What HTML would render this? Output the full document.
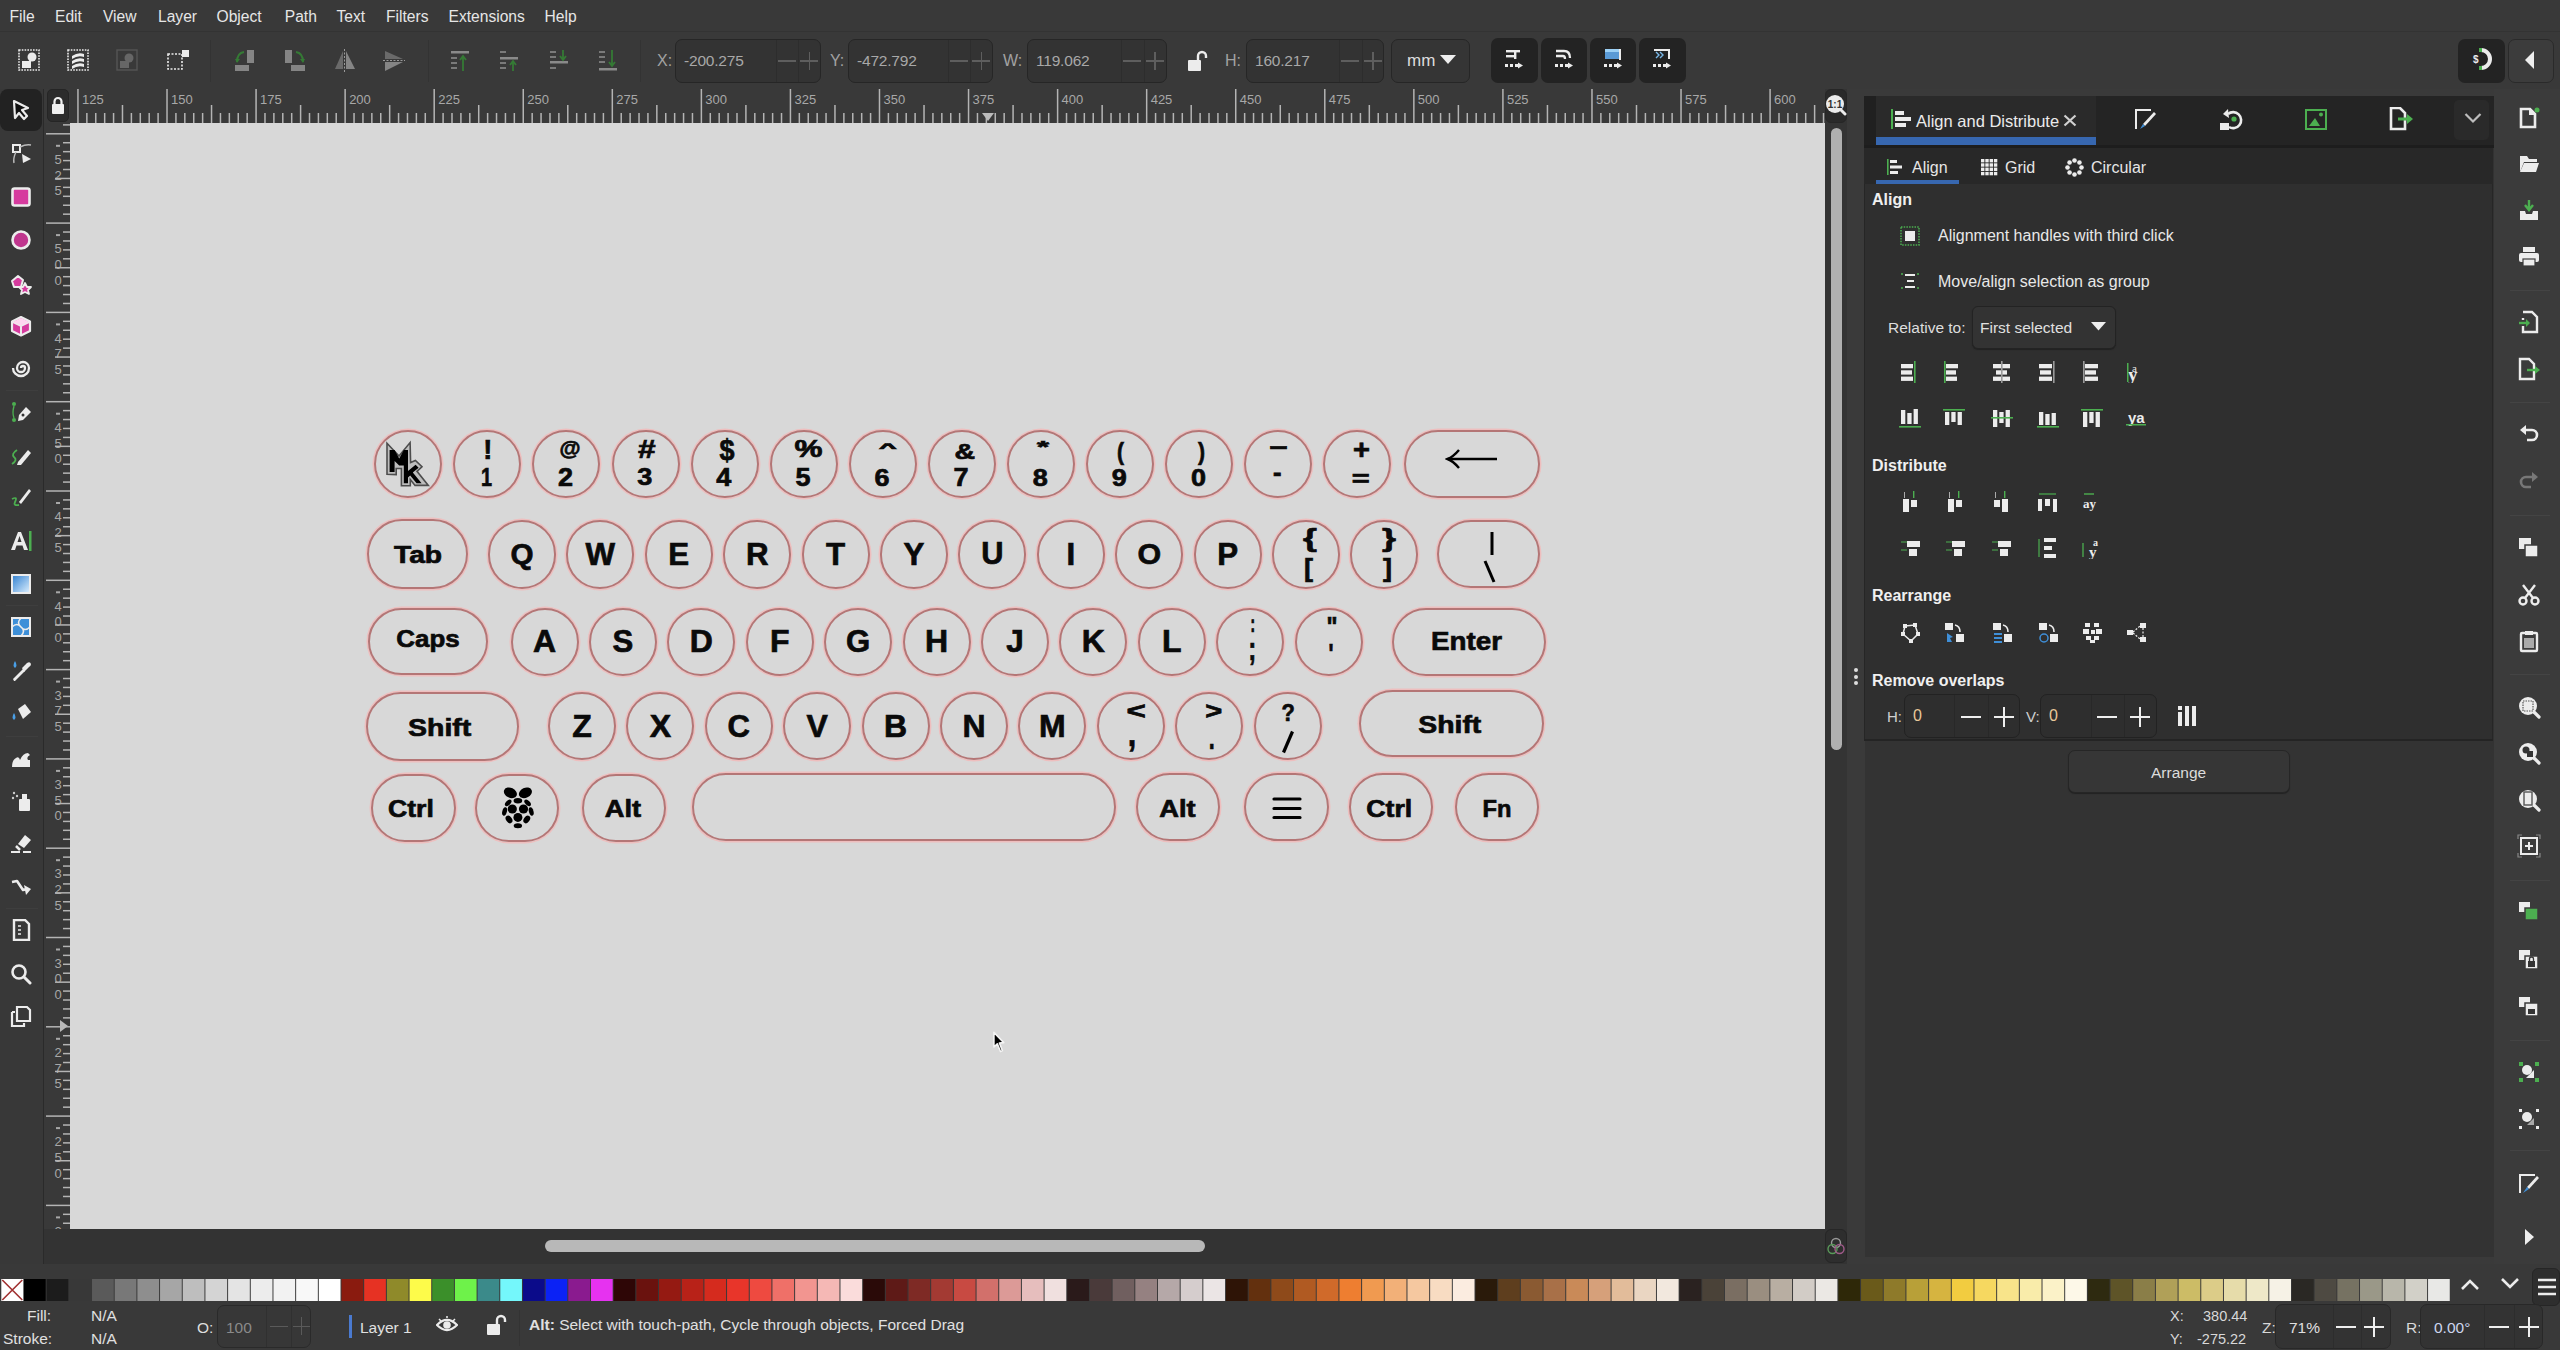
<!DOCTYPE html><html><head><meta charset="utf-8"><style>
html,body{margin:0;padding:0;}body{width:2560px;height:1350px;overflow:hidden;position:relative;background:#3a3a3a;font-family:"Liberation Sans", sans-serif;}
div,svg{box-sizing:border-box;}
</style></head><body>
<div style="position:absolute;left:0px;top:0px;width:2560px;height:32px;background:#393939"></div>
<div style="position:absolute;left:0px;top:31px;width:2560px;height:1px;background:#333"></div>
<div style="position:absolute;left:0px;top:32px;width:2560px;height:57px;background:#393939"></div>
<div style="position:absolute;left:0px;top:89px;width:43px;height:1175px;background:#383838"></div>
<div style="position:absolute;left:43px;top:89px;width:1px;height:1175px;background:#2a2a2a"></div>
<div style="position:absolute;left:44px;top:123px;width:26px;height:1106px;background:#393939"></div>
<div style="position:absolute;left:70px;top:89px;width:1755px;height:34px;background:#393939"></div>
<div style="position:absolute;left:70px;top:123px;width:1755px;height:1106px;background:#d8d8d8"></div>
<div style="position:absolute;left:1825px;top:89px;width:22px;height:1175px;background:#343434"></div>
<div style="position:absolute;left:44px;top:1229px;width:1803px;height:35px;background:#333333"></div>
<div style="position:absolute;left:1847px;top:89px;width:18px;height:1175px;background:#3a3a3a"></div>
<div style="position:absolute;left:1865px;top:96px;width:629px;height:1161px;background:#323232"></div>
<div style="position:absolute;left:2494px;top:89px;width:66px;height:1175px;background:#3b3b3b"></div>
<div style="position:absolute;left:0px;top:1264px;width:2560px;height:38px;background:#393939"></div>
<div style="position:absolute;left:0px;top:1302px;width:2560px;height:48px;background:#393939"></div>
<div style="position:absolute;left:373.6px;top:429.5px;width:68.0px;height:68.0px;border-radius:34.0px;border:2px solid #b47676;box-shadow:0 0 0 1.5px rgba(246,182,182,.75);"></div>
<div style="position:absolute;left:453.3px;top:429.5px;width:68.0px;height:68.0px;border-radius:34.0px;border:2px solid #b47676;box-shadow:0 0 0 1.5px rgba(246,182,182,.75);"></div>
<div style="position:absolute;left:532.4px;top:429.5px;width:68.0px;height:68.0px;border-radius:34.0px;border:2px solid #b47676;box-shadow:0 0 0 1.5px rgba(246,182,182,.75);"></div>
<div style="position:absolute;left:611.5px;top:429.5px;width:68.0px;height:68.0px;border-radius:34.0px;border:2px solid #b47676;box-shadow:0 0 0 1.5px rgba(246,182,182,.75);"></div>
<div style="position:absolute;left:690.6px;top:429.5px;width:68.0px;height:68.0px;border-radius:34.0px;border:2px solid #b47676;box-shadow:0 0 0 1.5px rgba(246,182,182,.75);"></div>
<div style="position:absolute;left:769.7px;top:429.5px;width:68.0px;height:68.0px;border-radius:34.0px;border:2px solid #b47676;box-shadow:0 0 0 1.5px rgba(246,182,182,.75);"></div>
<div style="position:absolute;left:848.8px;top:429.5px;width:68.0px;height:68.0px;border-radius:34.0px;border:2px solid #b47676;box-shadow:0 0 0 1.5px rgba(246,182,182,.75);"></div>
<div style="position:absolute;left:927.9px;top:429.5px;width:68.0px;height:68.0px;border-radius:34.0px;border:2px solid #b47676;box-shadow:0 0 0 1.5px rgba(246,182,182,.75);"></div>
<div style="position:absolute;left:1007.0px;top:429.5px;width:68.0px;height:68.0px;border-radius:34.0px;border:2px solid #b47676;box-shadow:0 0 0 1.5px rgba(246,182,182,.75);"></div>
<div style="position:absolute;left:1086.1px;top:429.5px;width:68.0px;height:68.0px;border-radius:34.0px;border:2px solid #b47676;box-shadow:0 0 0 1.5px rgba(246,182,182,.75);"></div>
<div style="position:absolute;left:1165.2px;top:429.5px;width:68.0px;height:68.0px;border-radius:34.0px;border:2px solid #b47676;box-shadow:0 0 0 1.5px rgba(246,182,182,.75);"></div>
<div style="position:absolute;left:1244.3px;top:429.5px;width:68.0px;height:68.0px;border-radius:34.0px;border:2px solid #b47676;box-shadow:0 0 0 1.5px rgba(246,182,182,.75);"></div>
<div style="position:absolute;left:1323.4px;top:429.5px;width:68.0px;height:68.0px;border-radius:34.0px;border:2px solid #b47676;box-shadow:0 0 0 1.5px rgba(246,182,182,.75);"></div>
<div style="position:absolute;left:1404.0px;top:429.7px;width:136.0px;height:68.3px;border-radius:34.2px;border:2px solid #b47676;box-shadow:0 0 0 1.5px rgba(246,182,182,.75);"></div>
<div style="position:absolute;left:366.7px;top:519.0px;width:101.3px;height:70.0px;border-radius:35.0px;border:2px solid #b47676;box-shadow:0 0 0 1.5px rgba(246,182,182,.75);"></div>
<div style="position:absolute;left:488.0px;top:520.0px;width:68.0px;height:68.7px;border-radius:34.4px;border:2px solid #b47676;box-shadow:0 0 0 1.5px rgba(246,182,182,.75);"></div>
<div style="position:absolute;left:566.4px;top:520.0px;width:68.0px;height:68.7px;border-radius:34.4px;border:2px solid #b47676;box-shadow:0 0 0 1.5px rgba(246,182,182,.75);"></div>
<div style="position:absolute;left:644.8px;top:520.0px;width:68.0px;height:68.7px;border-radius:34.4px;border:2px solid #b47676;box-shadow:0 0 0 1.5px rgba(246,182,182,.75);"></div>
<div style="position:absolute;left:723.2px;top:520.0px;width:68.0px;height:68.7px;border-radius:34.4px;border:2px solid #b47676;box-shadow:0 0 0 1.5px rgba(246,182,182,.75);"></div>
<div style="position:absolute;left:801.6px;top:520.0px;width:68.0px;height:68.7px;border-radius:34.4px;border:2px solid #b47676;box-shadow:0 0 0 1.5px rgba(246,182,182,.75);"></div>
<div style="position:absolute;left:880.0px;top:520.0px;width:68.0px;height:68.7px;border-radius:34.4px;border:2px solid #b47676;box-shadow:0 0 0 1.5px rgba(246,182,182,.75);"></div>
<div style="position:absolute;left:958.4px;top:520.0px;width:68.0px;height:68.7px;border-radius:34.4px;border:2px solid #b47676;box-shadow:0 0 0 1.5px rgba(246,182,182,.75);"></div>
<div style="position:absolute;left:1036.8px;top:520.0px;width:68.0px;height:68.7px;border-radius:34.4px;border:2px solid #b47676;box-shadow:0 0 0 1.5px rgba(246,182,182,.75);"></div>
<div style="position:absolute;left:1115.2px;top:520.0px;width:68.0px;height:68.7px;border-radius:34.4px;border:2px solid #b47676;box-shadow:0 0 0 1.5px rgba(246,182,182,.75);"></div>
<div style="position:absolute;left:1193.6px;top:520.0px;width:68.0px;height:68.7px;border-radius:34.4px;border:2px solid #b47676;box-shadow:0 0 0 1.5px rgba(246,182,182,.75);"></div>
<div style="position:absolute;left:1272.0px;top:520.0px;width:68.0px;height:68.7px;border-radius:34.4px;border:2px solid #b47676;box-shadow:0 0 0 1.5px rgba(246,182,182,.75);"></div>
<div style="position:absolute;left:1350.4px;top:520.0px;width:68.0px;height:68.7px;border-radius:34.4px;border:2px solid #b47676;box-shadow:0 0 0 1.5px rgba(246,182,182,.75);"></div>
<div style="position:absolute;left:1437.0px;top:520.0px;width:102.7px;height:68.0px;border-radius:34.0px;border:2px solid #b47676;box-shadow:0 0 0 1.5px rgba(246,182,182,.75);"></div>
<div style="position:absolute;left:368.2px;top:607.5px;width:119.5px;height:67.0px;border-radius:33.5px;border:2px solid #b47676;box-shadow:0 0 0 1.5px rgba(246,182,182,.75);"></div>
<div style="position:absolute;left:510.5px;top:607.5px;width:68.0px;height:68.0px;border-radius:34.0px;border:2px solid #b47676;box-shadow:0 0 0 1.5px rgba(246,182,182,.75);"></div>
<div style="position:absolute;left:588.9px;top:607.5px;width:68.0px;height:68.0px;border-radius:34.0px;border:2px solid #b47676;box-shadow:0 0 0 1.5px rgba(246,182,182,.75);"></div>
<div style="position:absolute;left:667.3px;top:607.5px;width:68.0px;height:68.0px;border-radius:34.0px;border:2px solid #b47676;box-shadow:0 0 0 1.5px rgba(246,182,182,.75);"></div>
<div style="position:absolute;left:745.7px;top:607.5px;width:68.0px;height:68.0px;border-radius:34.0px;border:2px solid #b47676;box-shadow:0 0 0 1.5px rgba(246,182,182,.75);"></div>
<div style="position:absolute;left:824.1px;top:607.5px;width:68.0px;height:68.0px;border-radius:34.0px;border:2px solid #b47676;box-shadow:0 0 0 1.5px rgba(246,182,182,.75);"></div>
<div style="position:absolute;left:902.5px;top:607.5px;width:68.0px;height:68.0px;border-radius:34.0px;border:2px solid #b47676;box-shadow:0 0 0 1.5px rgba(246,182,182,.75);"></div>
<div style="position:absolute;left:980.9px;top:607.5px;width:68.0px;height:68.0px;border-radius:34.0px;border:2px solid #b47676;box-shadow:0 0 0 1.5px rgba(246,182,182,.75);"></div>
<div style="position:absolute;left:1059.3px;top:607.5px;width:68.0px;height:68.0px;border-radius:34.0px;border:2px solid #b47676;box-shadow:0 0 0 1.5px rgba(246,182,182,.75);"></div>
<div style="position:absolute;left:1137.7px;top:607.5px;width:68.0px;height:68.0px;border-radius:34.0px;border:2px solid #b47676;box-shadow:0 0 0 1.5px rgba(246,182,182,.75);"></div>
<div style="position:absolute;left:1216.1px;top:607.5px;width:68.0px;height:68.0px;border-radius:34.0px;border:2px solid #b47676;box-shadow:0 0 0 1.5px rgba(246,182,182,.75);"></div>
<div style="position:absolute;left:1294.5px;top:607.5px;width:68.0px;height:68.0px;border-radius:34.0px;border:2px solid #b47676;box-shadow:0 0 0 1.5px rgba(246,182,182,.75);"></div>
<div style="position:absolute;left:1392.4px;top:607.5px;width:153.4px;height:68.0px;border-radius:34.0px;border:2px solid #b47676;box-shadow:0 0 0 1.5px rgba(246,182,182,.75);"></div>
<div style="position:absolute;left:365.9px;top:691.7px;width:153.0px;height:69.2px;border-radius:34.6px;border:2px solid #b47676;box-shadow:0 0 0 1.5px rgba(246,182,182,.75);"></div>
<div style="position:absolute;left:548.0px;top:692.0px;width:68.0px;height:68.0px;border-radius:34.0px;border:2px solid #b47676;box-shadow:0 0 0 1.5px rgba(246,182,182,.75);"></div>
<div style="position:absolute;left:626.4px;top:692.0px;width:68.0px;height:68.0px;border-radius:34.0px;border:2px solid #b47676;box-shadow:0 0 0 1.5px rgba(246,182,182,.75);"></div>
<div style="position:absolute;left:704.8px;top:692.0px;width:68.0px;height:68.0px;border-radius:34.0px;border:2px solid #b47676;box-shadow:0 0 0 1.5px rgba(246,182,182,.75);"></div>
<div style="position:absolute;left:783.2px;top:692.0px;width:68.0px;height:68.0px;border-radius:34.0px;border:2px solid #b47676;box-shadow:0 0 0 1.5px rgba(246,182,182,.75);"></div>
<div style="position:absolute;left:861.6px;top:692.0px;width:68.0px;height:68.0px;border-radius:34.0px;border:2px solid #b47676;box-shadow:0 0 0 1.5px rgba(246,182,182,.75);"></div>
<div style="position:absolute;left:940.0px;top:692.0px;width:68.0px;height:68.0px;border-radius:34.0px;border:2px solid #b47676;box-shadow:0 0 0 1.5px rgba(246,182,182,.75);"></div>
<div style="position:absolute;left:1018.4px;top:692.0px;width:68.0px;height:68.0px;border-radius:34.0px;border:2px solid #b47676;box-shadow:0 0 0 1.5px rgba(246,182,182,.75);"></div>
<div style="position:absolute;left:1096.8px;top:692.0px;width:68.0px;height:68.0px;border-radius:34.0px;border:2px solid #b47676;box-shadow:0 0 0 1.5px rgba(246,182,182,.75);"></div>
<div style="position:absolute;left:1175.2px;top:692.0px;width:68.0px;height:68.0px;border-radius:34.0px;border:2px solid #b47676;box-shadow:0 0 0 1.5px rgba(246,182,182,.75);"></div>
<div style="position:absolute;left:1253.6px;top:692.0px;width:68.0px;height:68.0px;border-radius:34.0px;border:2px solid #b47676;box-shadow:0 0 0 1.5px rgba(246,182,182,.75);"></div>
<div style="position:absolute;left:1359.0px;top:689.7px;width:185.3px;height:67.8px;border-radius:33.9px;border:2px solid #b47676;box-shadow:0 0 0 1.5px rgba(246,182,182,.75);"></div>
<div style="position:absolute;left:370.5px;top:773.5px;width:85.5px;height:68.0px;border-radius:34.0px;border:2px solid #b47676;box-shadow:0 0 0 1.5px rgba(246,182,182,.75);"></div>
<div style="position:absolute;left:474.8px;top:773.5px;width:84.4px;height:68.0px;border-radius:34.0px;border:2px solid #b47676;box-shadow:0 0 0 1.5px rgba(246,182,182,.75);"></div>
<div style="position:absolute;left:581.5px;top:773.5px;width:84.3px;height:68.0px;border-radius:34.0px;border:2px solid #b47676;box-shadow:0 0 0 1.5px rgba(246,182,182,.75);"></div>
<div style="position:absolute;left:691.6px;top:773.2px;width:424.0px;height:67.8px;border-radius:33.9px;border:2px solid #b47676;box-shadow:0 0 0 1.5px rgba(246,182,182,.75);"></div>
<div style="position:absolute;left:1136.2px;top:773.2px;width:83.5px;height:67.8px;border-radius:33.9px;border:2px solid #b47676;box-shadow:0 0 0 1.5px rgba(246,182,182,.75);"></div>
<div style="position:absolute;left:1244.0px;top:773.2px;width:84.7px;height:67.8px;border-radius:33.9px;border:2px solid #b47676;box-shadow:0 0 0 1.5px rgba(246,182,182,.75);"></div>
<div style="position:absolute;left:1349.3px;top:773.2px;width:83.6px;height:67.8px;border-radius:33.9px;border:2px solid #b47676;box-shadow:0 0 0 1.5px rgba(246,182,182,.75);"></div>
<div style="position:absolute;left:1454.7px;top:773.2px;width:84.7px;height:67.8px;border-radius:33.9px;border:2px solid #b47676;box-shadow:0 0 0 1.5px rgba(246,182,182,.75);"></div>
<svg style="position:absolute;left:0;top:0" width="2560" height="1350" font-family="Liberation Sans" font-weight="bold" fill="#0a0a0a" stroke="#0a0a0a" stroke-width="0.7"><text transform="translate(481.00 485.75) scale(0.779 1)" font-size="25.45">1</text><text transform="translate(558.10 485.75) scale(1.077 1)" font-size="25.09">2</text><text transform="translate(637.20 485.44) scale(1.097 1)" font-size="24.65">3</text><text transform="translate(716.30 485.75) scale(1.062 1)" font-size="25.45">4</text><text transform="translate(795.40 485.50) scale(1.077 1)" font-size="25.09">5</text><text transform="translate(874.50 485.50) scale(1.093 1)" font-size="24.73">6</text><text transform="translate(953.60 485.75) scale(1.062 1)" font-size="25.45">7</text><text transform="translate(1032.70 485.50) scale(1.093 1)" font-size="24.73">8</text><text transform="translate(1111.80 485.50) scale(1.093 1)" font-size="24.73">9</text><text transform="translate(1190.90 485.50) scale(1.093 1)" font-size="24.73">0</text><text transform="translate(483.28 458.75) scale(1.000 1)" font-size="27.20">!</text><text transform="translate(559.50 455.43) scale(1.038 1)" font-size="20.75">@</text><text transform="translate(638.00 457.50) scale(1.232 1)" font-size="25.74">#</text><text transform="translate(719.40 460.30) scale(0.933 1)" font-size="28.96">$</text><text transform="translate(794.40 457.35) scale(1.360 1)" font-size="23.13">%</text><text transform="translate(879.10 451.60) scale(2.522 1)" font-size="11.93">^</text><text transform="translate(954.50 458.55) scale(1.272 1)" font-size="22.42">&amp;</text><text transform="translate(1037.00 452.80) scale(1.923 1)" font-size="16.00">*</text><text transform="translate(1116.90 459.68) scale(0.854 1)" font-size="24.66">(</text><text transform="translate(1198.10 459.68) scale(0.854 1)" font-size="24.66">)</text><text transform="translate(1353.00 458.77) scale(1.084 1)" font-size="26.81">+</text><text transform="translate(1269.50 454.87) scale(1.297 1)" font-size="25.00">–</text><text transform="translate(1273.05 481.00) scale(1.023 1)" font-size="25.00">-</text><text transform="translate(1351.80 485.50) scale(1.455 1)" font-size="21.15">=</text><text transform="translate(510.49 563.90) scale(1.000 1)" font-size="29.61">Q</text><text transform="translate(585.62 564.75) scale(1.000 1)" font-size="31.27">W</text><text transform="translate(668.36 564.75) scale(1.000 1)" font-size="31.27">E</text><text transform="translate(745.90 564.75) scale(1.000 1)" font-size="31.27">R</text><text transform="translate(826.06 564.75) scale(1.000 1)" font-size="31.27">T</text><text transform="translate(903.56 564.75) scale(1.000 1)" font-size="31.27">Y</text><text transform="translate(981.26 564.44) scale(1.000 1)" font-size="30.82">U</text><text transform="translate(1066.46 564.75) scale(1.000 1)" font-size="31.27">I</text><text transform="translate(1137.39 564.45) scale(1.000 1)" font-size="30.39">O</text><text transform="translate(1217.16 564.75) scale(1.000 1)" font-size="31.27">P</text><text transform="translate(532.94 652.00) scale(1.000 1)" font-size="32.00">A</text><text transform="translate(612.52 651.69) scale(1.000 1)" font-size="31.10">S</text><text transform="translate(689.74 652.00) scale(1.000 1)" font-size="32.00">D</text><text transform="translate(769.94 652.00) scale(1.000 1)" font-size="32.00">F</text><text transform="translate(846.01 651.69) scale(1.000 1)" font-size="31.10">G</text><text transform="translate(924.94 652.00) scale(1.000 1)" font-size="32.00">H</text><text transform="translate(1006.15 651.68) scale(1.000 1)" font-size="31.54">J</text><text transform="translate(1081.74 652.00) scale(1.000 1)" font-size="32.00">K</text><text transform="translate(1161.94 652.00) scale(1.000 1)" font-size="32.00">L</text><text transform="translate(572.24 737.20) scale(1.000 1)" font-size="32.00">Z</text><text transform="translate(649.72 737.20) scale(1.000 1)" font-size="32.00">X</text><text transform="translate(727.57 736.89) scale(1.000 1)" font-size="31.10">C</text><text transform="translate(806.52 737.20) scale(1.000 1)" font-size="32.00">V</text><text transform="translate(884.04 737.20) scale(1.000 1)" font-size="32.00">B</text><text transform="translate(962.44 737.20) scale(1.000 1)" font-size="32.00">N</text><text transform="translate(1039.08 737.20) scale(1.000 1)" font-size="32.00">M</text><text transform="translate(1303.00 547.49) scale(1.431 1)" font-size="25.09">{</text><text transform="translate(1304.00 576.64) scale(1.039 1)" font-size="26.06">[</text><text transform="translate(1381.90 547.49) scale(1.431 1)" font-size="25.09">}</text><text transform="translate(1382.90 576.64) scale(1.039 1)" font-size="26.06">]</text><text transform="translate(1250.20 631.90) scale(0.622 1)" font-size="24.16">:</text><text transform="translate(1248.20 660.14) scale(0.709 1)" font-size="33.94">;</text><text transform="translate(1126.50 718.75) scale(1.372 1)" font-size="24.17">&lt;</text><text transform="translate(1127.75 745.91) scale(0.849 1)" font-size="36.07">,</text><text transform="translate(1205.20 718.75) scale(1.202 1)" font-size="24.17">&gt;</text><text transform="translate(1208.80 749.00) scale(0.649 1)" font-size="33.33">.</text><text transform="translate(1281.45 721.00) scale(0.895 1)" font-size="24.37">?</text><text transform="translate(1326.50 636.18) scale(0.858 1)" font-size="27.00">&quot;</text><text transform="translate(1328.50 663.28) scale(0.780 1)" font-size="27.00">'</text><text transform="translate(394.00 563.11) scale(1.198 1)" font-size="23.54">Tab</text><text transform="translate(396.35 647.04) scale(1.051 1)" font-size="24.64">Caps</text><text transform="translate(1431.00 649.89) scale(1.059 1)" font-size="26.24">Enter</text><text transform="translate(408.05 735.91) scale(1.196 1)" font-size="23.81">Shift</text><text transform="translate(1418.30 733.31) scale(1.191 1)" font-size="23.81">Shift</text><text transform="translate(388.00 816.86) scale(1.110 1)" font-size="23.95">Ctrl</text><text transform="translate(604.85 816.86) scale(1.138 1)" font-size="23.95">Alt</text><text transform="translate(1159.25 816.67) scale(1.178 1)" font-size="23.13">Alt</text><text transform="translate(1366.30 816.67) scale(1.155 1)" font-size="23.13">Ctrl</text><text transform="translate(1482.50 816.90) scale(0.959 1)" font-size="24.73">Fn</text></svg>
<svg style="position:absolute;left:70px;top:89px;" width="1755" height="34" viewBox="0 0 1755 34"><rect x="7.20" y="0" width="1.5" height="34" fill="#b4b4b4"/><text x="11.95" y="15" font-size="13" fill="#a8a8a8" font-family="Liberation Sans">125</text><rect x="16.11" y="24" width="1.5" height="10" fill="#b4b4b4"/><rect x="25.01" y="24" width="1.5" height="10" fill="#b4b4b4"/><rect x="33.92" y="24" width="1.5" height="10" fill="#b4b4b4"/><rect x="42.82" y="24" width="1.5" height="10" fill="#b4b4b4"/><rect x="51.73" y="16" width="1.5" height="18" fill="#b4b4b4"/><rect x="60.64" y="24" width="1.5" height="10" fill="#b4b4b4"/><rect x="69.54" y="24" width="1.5" height="10" fill="#b4b4b4"/><rect x="78.45" y="24" width="1.5" height="10" fill="#b4b4b4"/><rect x="87.35" y="24" width="1.5" height="10" fill="#b4b4b4"/><rect x="96.26" y="0" width="1.5" height="34" fill="#b4b4b4"/><text x="101.01" y="15" font-size="13" fill="#a8a8a8" font-family="Liberation Sans">150</text><rect x="105.17" y="24" width="1.5" height="10" fill="#b4b4b4"/><rect x="114.07" y="24" width="1.5" height="10" fill="#b4b4b4"/><rect x="122.98" y="24" width="1.5" height="10" fill="#b4b4b4"/><rect x="131.88" y="24" width="1.5" height="10" fill="#b4b4b4"/><rect x="140.79" y="16" width="1.5" height="18" fill="#b4b4b4"/><rect x="149.70" y="24" width="1.5" height="10" fill="#b4b4b4"/><rect x="158.60" y="24" width="1.5" height="10" fill="#b4b4b4"/><rect x="167.51" y="24" width="1.5" height="10" fill="#b4b4b4"/><rect x="176.41" y="24" width="1.5" height="10" fill="#b4b4b4"/><rect x="185.32" y="0" width="1.5" height="34" fill="#b4b4b4"/><text x="190.07" y="15" font-size="13" fill="#a8a8a8" font-family="Liberation Sans">175</text><rect x="194.23" y="24" width="1.5" height="10" fill="#b4b4b4"/><rect x="203.13" y="24" width="1.5" height="10" fill="#b4b4b4"/><rect x="212.04" y="24" width="1.5" height="10" fill="#b4b4b4"/><rect x="220.94" y="24" width="1.5" height="10" fill="#b4b4b4"/><rect x="229.85" y="16" width="1.5" height="18" fill="#b4b4b4"/><rect x="238.76" y="24" width="1.5" height="10" fill="#b4b4b4"/><rect x="247.66" y="24" width="1.5" height="10" fill="#b4b4b4"/><rect x="256.57" y="24" width="1.5" height="10" fill="#b4b4b4"/><rect x="265.47" y="24" width="1.5" height="10" fill="#b4b4b4"/><rect x="274.38" y="0" width="1.5" height="34" fill="#b4b4b4"/><text x="279.13" y="15" font-size="13" fill="#a8a8a8" font-family="Liberation Sans">200</text><rect x="283.29" y="24" width="1.5" height="10" fill="#b4b4b4"/><rect x="292.19" y="24" width="1.5" height="10" fill="#b4b4b4"/><rect x="301.10" y="24" width="1.5" height="10" fill="#b4b4b4"/><rect x="310.00" y="24" width="1.5" height="10" fill="#b4b4b4"/><rect x="318.91" y="16" width="1.5" height="18" fill="#b4b4b4"/><rect x="327.82" y="24" width="1.5" height="10" fill="#b4b4b4"/><rect x="336.72" y="24" width="1.5" height="10" fill="#b4b4b4"/><rect x="345.63" y="24" width="1.5" height="10" fill="#b4b4b4"/><rect x="354.53" y="24" width="1.5" height="10" fill="#b4b4b4"/><rect x="363.44" y="0" width="1.5" height="34" fill="#b4b4b4"/><text x="368.19" y="15" font-size="13" fill="#a8a8a8" font-family="Liberation Sans">225</text><rect x="372.35" y="24" width="1.5" height="10" fill="#b4b4b4"/><rect x="381.25" y="24" width="1.5" height="10" fill="#b4b4b4"/><rect x="390.16" y="24" width="1.5" height="10" fill="#b4b4b4"/><rect x="399.06" y="24" width="1.5" height="10" fill="#b4b4b4"/><rect x="407.97" y="16" width="1.5" height="18" fill="#b4b4b4"/><rect x="416.88" y="24" width="1.5" height="10" fill="#b4b4b4"/><rect x="425.78" y="24" width="1.5" height="10" fill="#b4b4b4"/><rect x="434.69" y="24" width="1.5" height="10" fill="#b4b4b4"/><rect x="443.59" y="24" width="1.5" height="10" fill="#b4b4b4"/><rect x="452.50" y="0" width="1.5" height="34" fill="#b4b4b4"/><text x="457.25" y="15" font-size="13" fill="#a8a8a8" font-family="Liberation Sans">250</text><rect x="461.41" y="24" width="1.5" height="10" fill="#b4b4b4"/><rect x="470.31" y="24" width="1.5" height="10" fill="#b4b4b4"/><rect x="479.22" y="24" width="1.5" height="10" fill="#b4b4b4"/><rect x="488.12" y="24" width="1.5" height="10" fill="#b4b4b4"/><rect x="497.03" y="16" width="1.5" height="18" fill="#b4b4b4"/><rect x="505.94" y="24" width="1.5" height="10" fill="#b4b4b4"/><rect x="514.84" y="24" width="1.5" height="10" fill="#b4b4b4"/><rect x="523.75" y="24" width="1.5" height="10" fill="#b4b4b4"/><rect x="532.65" y="24" width="1.5" height="10" fill="#b4b4b4"/><rect x="541.56" y="0" width="1.5" height="34" fill="#b4b4b4"/><text x="546.31" y="15" font-size="13" fill="#a8a8a8" font-family="Liberation Sans">275</text><rect x="550.47" y="24" width="1.5" height="10" fill="#b4b4b4"/><rect x="559.37" y="24" width="1.5" height="10" fill="#b4b4b4"/><rect x="568.28" y="24" width="1.5" height="10" fill="#b4b4b4"/><rect x="577.18" y="24" width="1.5" height="10" fill="#b4b4b4"/><rect x="586.09" y="16" width="1.5" height="18" fill="#b4b4b4"/><rect x="595.00" y="24" width="1.5" height="10" fill="#b4b4b4"/><rect x="603.90" y="24" width="1.5" height="10" fill="#b4b4b4"/><rect x="612.81" y="24" width="1.5" height="10" fill="#b4b4b4"/><rect x="621.71" y="24" width="1.5" height="10" fill="#b4b4b4"/><rect x="630.62" y="0" width="1.5" height="34" fill="#b4b4b4"/><text x="635.37" y="15" font-size="13" fill="#a8a8a8" font-family="Liberation Sans">300</text><rect x="639.53" y="24" width="1.5" height="10" fill="#b4b4b4"/><rect x="648.43" y="24" width="1.5" height="10" fill="#b4b4b4"/><rect x="657.34" y="24" width="1.5" height="10" fill="#b4b4b4"/><rect x="666.24" y="24" width="1.5" height="10" fill="#b4b4b4"/><rect x="675.15" y="16" width="1.5" height="18" fill="#b4b4b4"/><rect x="684.06" y="24" width="1.5" height="10" fill="#b4b4b4"/><rect x="692.96" y="24" width="1.5" height="10" fill="#b4b4b4"/><rect x="701.87" y="24" width="1.5" height="10" fill="#b4b4b4"/><rect x="710.77" y="24" width="1.5" height="10" fill="#b4b4b4"/><rect x="719.68" y="0" width="1.5" height="34" fill="#b4b4b4"/><text x="724.43" y="15" font-size="13" fill="#a8a8a8" font-family="Liberation Sans">325</text><rect x="728.59" y="24" width="1.5" height="10" fill="#b4b4b4"/><rect x="737.49" y="24" width="1.5" height="10" fill="#b4b4b4"/><rect x="746.40" y="24" width="1.5" height="10" fill="#b4b4b4"/><rect x="755.30" y="24" width="1.5" height="10" fill="#b4b4b4"/><rect x="764.21" y="16" width="1.5" height="18" fill="#b4b4b4"/><rect x="773.12" y="24" width="1.5" height="10" fill="#b4b4b4"/><rect x="782.02" y="24" width="1.5" height="10" fill="#b4b4b4"/><rect x="790.93" y="24" width="1.5" height="10" fill="#b4b4b4"/><rect x="799.83" y="24" width="1.5" height="10" fill="#b4b4b4"/><rect x="808.74" y="0" width="1.5" height="34" fill="#b4b4b4"/><text x="813.49" y="15" font-size="13" fill="#a8a8a8" font-family="Liberation Sans">350</text><rect x="817.65" y="24" width="1.5" height="10" fill="#b4b4b4"/><rect x="826.55" y="24" width="1.5" height="10" fill="#b4b4b4"/><rect x="835.46" y="24" width="1.5" height="10" fill="#b4b4b4"/><rect x="844.36" y="24" width="1.5" height="10" fill="#b4b4b4"/><rect x="853.27" y="16" width="1.5" height="18" fill="#b4b4b4"/><rect x="862.18" y="24" width="1.5" height="10" fill="#b4b4b4"/><rect x="871.08" y="24" width="1.5" height="10" fill="#b4b4b4"/><rect x="879.99" y="24" width="1.5" height="10" fill="#b4b4b4"/><rect x="888.89" y="24" width="1.5" height="10" fill="#b4b4b4"/><rect x="897.80" y="0" width="1.5" height="34" fill="#b4b4b4"/><text x="902.55" y="15" font-size="13" fill="#a8a8a8" font-family="Liberation Sans">375</text><rect x="906.71" y="24" width="1.5" height="10" fill="#b4b4b4"/><rect x="915.61" y="24" width="1.5" height="10" fill="#b4b4b4"/><rect x="924.52" y="24" width="1.5" height="10" fill="#b4b4b4"/><rect x="933.42" y="24" width="1.5" height="10" fill="#b4b4b4"/><rect x="942.33" y="16" width="1.5" height="18" fill="#b4b4b4"/><rect x="951.24" y="24" width="1.5" height="10" fill="#b4b4b4"/><rect x="960.14" y="24" width="1.5" height="10" fill="#b4b4b4"/><rect x="969.05" y="24" width="1.5" height="10" fill="#b4b4b4"/><rect x="977.95" y="24" width="1.5" height="10" fill="#b4b4b4"/><rect x="986.86" y="0" width="1.5" height="34" fill="#b4b4b4"/><text x="991.61" y="15" font-size="13" fill="#a8a8a8" font-family="Liberation Sans">400</text><rect x="995.77" y="24" width="1.5" height="10" fill="#b4b4b4"/><rect x="1004.67" y="24" width="1.5" height="10" fill="#b4b4b4"/><rect x="1013.58" y="24" width="1.5" height="10" fill="#b4b4b4"/><rect x="1022.48" y="24" width="1.5" height="10" fill="#b4b4b4"/><rect x="1031.39" y="16" width="1.5" height="18" fill="#b4b4b4"/><rect x="1040.30" y="24" width="1.5" height="10" fill="#b4b4b4"/><rect x="1049.20" y="24" width="1.5" height="10" fill="#b4b4b4"/><rect x="1058.11" y="24" width="1.5" height="10" fill="#b4b4b4"/><rect x="1067.01" y="24" width="1.5" height="10" fill="#b4b4b4"/><rect x="1075.92" y="0" width="1.5" height="34" fill="#b4b4b4"/><text x="1080.67" y="15" font-size="13" fill="#a8a8a8" font-family="Liberation Sans">425</text><rect x="1084.83" y="24" width="1.5" height="10" fill="#b4b4b4"/><rect x="1093.73" y="24" width="1.5" height="10" fill="#b4b4b4"/><rect x="1102.64" y="24" width="1.5" height="10" fill="#b4b4b4"/><rect x="1111.54" y="24" width="1.5" height="10" fill="#b4b4b4"/><rect x="1120.45" y="16" width="1.5" height="18" fill="#b4b4b4"/><rect x="1129.36" y="24" width="1.5" height="10" fill="#b4b4b4"/><rect x="1138.26" y="24" width="1.5" height="10" fill="#b4b4b4"/><rect x="1147.17" y="24" width="1.5" height="10" fill="#b4b4b4"/><rect x="1156.07" y="24" width="1.5" height="10" fill="#b4b4b4"/><rect x="1164.98" y="0" width="1.5" height="34" fill="#b4b4b4"/><text x="1169.73" y="15" font-size="13" fill="#a8a8a8" font-family="Liberation Sans">450</text><rect x="1173.89" y="24" width="1.5" height="10" fill="#b4b4b4"/><rect x="1182.79" y="24" width="1.5" height="10" fill="#b4b4b4"/><rect x="1191.70" y="24" width="1.5" height="10" fill="#b4b4b4"/><rect x="1200.60" y="24" width="1.5" height="10" fill="#b4b4b4"/><rect x="1209.51" y="16" width="1.5" height="18" fill="#b4b4b4"/><rect x="1218.42" y="24" width="1.5" height="10" fill="#b4b4b4"/><rect x="1227.32" y="24" width="1.5" height="10" fill="#b4b4b4"/><rect x="1236.23" y="24" width="1.5" height="10" fill="#b4b4b4"/><rect x="1245.13" y="24" width="1.5" height="10" fill="#b4b4b4"/><rect x="1254.04" y="0" width="1.5" height="34" fill="#b4b4b4"/><text x="1258.79" y="15" font-size="13" fill="#a8a8a8" font-family="Liberation Sans">475</text><rect x="1262.95" y="24" width="1.5" height="10" fill="#b4b4b4"/><rect x="1271.85" y="24" width="1.5" height="10" fill="#b4b4b4"/><rect x="1280.76" y="24" width="1.5" height="10" fill="#b4b4b4"/><rect x="1289.66" y="24" width="1.5" height="10" fill="#b4b4b4"/><rect x="1298.57" y="16" width="1.5" height="18" fill="#b4b4b4"/><rect x="1307.48" y="24" width="1.5" height="10" fill="#b4b4b4"/><rect x="1316.38" y="24" width="1.5" height="10" fill="#b4b4b4"/><rect x="1325.29" y="24" width="1.5" height="10" fill="#b4b4b4"/><rect x="1334.19" y="24" width="1.5" height="10" fill="#b4b4b4"/><rect x="1343.10" y="0" width="1.5" height="34" fill="#b4b4b4"/><text x="1347.85" y="15" font-size="13" fill="#a8a8a8" font-family="Liberation Sans">500</text><rect x="1352.01" y="24" width="1.5" height="10" fill="#b4b4b4"/><rect x="1360.91" y="24" width="1.5" height="10" fill="#b4b4b4"/><rect x="1369.82" y="24" width="1.5" height="10" fill="#b4b4b4"/><rect x="1378.72" y="24" width="1.5" height="10" fill="#b4b4b4"/><rect x="1387.63" y="16" width="1.5" height="18" fill="#b4b4b4"/><rect x="1396.54" y="24" width="1.5" height="10" fill="#b4b4b4"/><rect x="1405.44" y="24" width="1.5" height="10" fill="#b4b4b4"/><rect x="1414.35" y="24" width="1.5" height="10" fill="#b4b4b4"/><rect x="1423.25" y="24" width="1.5" height="10" fill="#b4b4b4"/><rect x="1432.16" y="0" width="1.5" height="34" fill="#b4b4b4"/><text x="1436.91" y="15" font-size="13" fill="#a8a8a8" font-family="Liberation Sans">525</text><rect x="1441.07" y="24" width="1.5" height="10" fill="#b4b4b4"/><rect x="1449.97" y="24" width="1.5" height="10" fill="#b4b4b4"/><rect x="1458.88" y="24" width="1.5" height="10" fill="#b4b4b4"/><rect x="1467.78" y="24" width="1.5" height="10" fill="#b4b4b4"/><rect x="1476.69" y="16" width="1.5" height="18" fill="#b4b4b4"/><rect x="1485.60" y="24" width="1.5" height="10" fill="#b4b4b4"/><rect x="1494.50" y="24" width="1.5" height="10" fill="#b4b4b4"/><rect x="1503.41" y="24" width="1.5" height="10" fill="#b4b4b4"/><rect x="1512.31" y="24" width="1.5" height="10" fill="#b4b4b4"/><rect x="1521.22" y="0" width="1.5" height="34" fill="#b4b4b4"/><text x="1525.97" y="15" font-size="13" fill="#a8a8a8" font-family="Liberation Sans">550</text><rect x="1530.13" y="24" width="1.5" height="10" fill="#b4b4b4"/><rect x="1539.03" y="24" width="1.5" height="10" fill="#b4b4b4"/><rect x="1547.94" y="24" width="1.5" height="10" fill="#b4b4b4"/><rect x="1556.84" y="24" width="1.5" height="10" fill="#b4b4b4"/><rect x="1565.75" y="16" width="1.5" height="18" fill="#b4b4b4"/><rect x="1574.66" y="24" width="1.5" height="10" fill="#b4b4b4"/><rect x="1583.56" y="24" width="1.5" height="10" fill="#b4b4b4"/><rect x="1592.47" y="24" width="1.5" height="10" fill="#b4b4b4"/><rect x="1601.37" y="24" width="1.5" height="10" fill="#b4b4b4"/><rect x="1610.28" y="0" width="1.5" height="34" fill="#b4b4b4"/><text x="1615.03" y="15" font-size="13" fill="#a8a8a8" font-family="Liberation Sans">575</text><rect x="1619.19" y="24" width="1.5" height="10" fill="#b4b4b4"/><rect x="1628.09" y="24" width="1.5" height="10" fill="#b4b4b4"/><rect x="1637.00" y="24" width="1.5" height="10" fill="#b4b4b4"/><rect x="1645.90" y="24" width="1.5" height="10" fill="#b4b4b4"/><rect x="1654.81" y="16" width="1.5" height="18" fill="#b4b4b4"/><rect x="1663.72" y="24" width="1.5" height="10" fill="#b4b4b4"/><rect x="1672.62" y="24" width="1.5" height="10" fill="#b4b4b4"/><rect x="1681.53" y="24" width="1.5" height="10" fill="#b4b4b4"/><rect x="1690.43" y="24" width="1.5" height="10" fill="#b4b4b4"/><rect x="1699.34" y="0" width="1.5" height="34" fill="#b4b4b4"/><text x="1704.09" y="15" font-size="13" fill="#a8a8a8" font-family="Liberation Sans">600</text><rect x="1708.25" y="24" width="1.5" height="10" fill="#b4b4b4"/><rect x="1717.15" y="24" width="1.5" height="10" fill="#b4b4b4"/><rect x="1726.06" y="24" width="1.5" height="10" fill="#b4b4b4"/><rect x="1734.96" y="24" width="1.5" height="10" fill="#b4b4b4"/><rect x="1743.87" y="16" width="1.5" height="18" fill="#b4b4b4"/><rect x="1752.78" y="24" width="1.5" height="10" fill="#b4b4b4"/></svg>
<svg style="position:absolute;left:980px;top:113px;" width="16" height="10" viewBox="0 0 16 10"><path d="M2 0 L14 0 L8 8 Z" fill="#bbb"/></svg>
<svg style="position:absolute;left:44px;top:123px;" width="26" height="1106" viewBox="0 0 26 1106"><rect x="19" y="1.12" width="7" height="1.5" fill="#b4b4b4"/><rect x="2" y="10.05" width="24" height="1.5" fill="#b4b4b4"/><rect x="12" y="21.80" width="4" height="2" fill="#a8a8a8"/><text x="14" y="41.00" font-size="13" text-anchor="middle" fill="#a8a8a8" font-family="Liberation Sans">5</text><text x="14" y="56.60" font-size="13" text-anchor="middle" fill="#a8a8a8" font-family="Liberation Sans">2</text><text x="14" y="72.20" font-size="13" text-anchor="middle" fill="#a8a8a8" font-family="Liberation Sans">5</text><rect x="19" y="18.98" width="7" height="1.5" fill="#b4b4b4"/><rect x="19" y="27.91" width="7" height="1.5" fill="#b4b4b4"/><rect x="19" y="36.84" width="7" height="1.5" fill="#b4b4b4"/><rect x="19" y="45.77" width="7" height="1.5" fill="#b4b4b4"/><rect x="11" y="54.70" width="15" height="1.5" fill="#b4b4b4"/><rect x="19" y="63.63" width="7" height="1.5" fill="#b4b4b4"/><rect x="19" y="72.56" width="7" height="1.5" fill="#b4b4b4"/><rect x="19" y="81.49" width="7" height="1.5" fill="#b4b4b4"/><rect x="19" y="90.42" width="7" height="1.5" fill="#b4b4b4"/><rect x="2" y="99.35" width="24" height="1.5" fill="#b4b4b4"/><rect x="12" y="111.10" width="4" height="2" fill="#a8a8a8"/><text x="14" y="130.30" font-size="13" text-anchor="middle" fill="#a8a8a8" font-family="Liberation Sans">5</text><text x="14" y="145.90" font-size="13" text-anchor="middle" fill="#a8a8a8" font-family="Liberation Sans">0</text><text x="14" y="161.50" font-size="13" text-anchor="middle" fill="#a8a8a8" font-family="Liberation Sans">0</text><rect x="19" y="108.28" width="7" height="1.5" fill="#b4b4b4"/><rect x="19" y="117.21" width="7" height="1.5" fill="#b4b4b4"/><rect x="19" y="126.14" width="7" height="1.5" fill="#b4b4b4"/><rect x="19" y="135.07" width="7" height="1.5" fill="#b4b4b4"/><rect x="11" y="144.00" width="15" height="1.5" fill="#b4b4b4"/><rect x="19" y="152.93" width="7" height="1.5" fill="#b4b4b4"/><rect x="19" y="161.86" width="7" height="1.5" fill="#b4b4b4"/><rect x="19" y="170.79" width="7" height="1.5" fill="#b4b4b4"/><rect x="19" y="179.72" width="7" height="1.5" fill="#b4b4b4"/><rect x="2" y="188.65" width="24" height="1.5" fill="#b4b4b4"/><rect x="12" y="200.40" width="4" height="2" fill="#a8a8a8"/><text x="14" y="219.60" font-size="13" text-anchor="middle" fill="#a8a8a8" font-family="Liberation Sans">4</text><text x="14" y="235.20" font-size="13" text-anchor="middle" fill="#a8a8a8" font-family="Liberation Sans">7</text><text x="14" y="250.80" font-size="13" text-anchor="middle" fill="#a8a8a8" font-family="Liberation Sans">5</text><rect x="19" y="197.58" width="7" height="1.5" fill="#b4b4b4"/><rect x="19" y="206.51" width="7" height="1.5" fill="#b4b4b4"/><rect x="19" y="215.44" width="7" height="1.5" fill="#b4b4b4"/><rect x="19" y="224.37" width="7" height="1.5" fill="#b4b4b4"/><rect x="11" y="233.30" width="15" height="1.5" fill="#b4b4b4"/><rect x="19" y="242.23" width="7" height="1.5" fill="#b4b4b4"/><rect x="19" y="251.16" width="7" height="1.5" fill="#b4b4b4"/><rect x="19" y="260.09" width="7" height="1.5" fill="#b4b4b4"/><rect x="19" y="269.02" width="7" height="1.5" fill="#b4b4b4"/><rect x="2" y="277.95" width="24" height="1.5" fill="#b4b4b4"/><rect x="12" y="289.70" width="4" height="2" fill="#a8a8a8"/><text x="14" y="308.90" font-size="13" text-anchor="middle" fill="#a8a8a8" font-family="Liberation Sans">4</text><text x="14" y="324.50" font-size="13" text-anchor="middle" fill="#a8a8a8" font-family="Liberation Sans">5</text><text x="14" y="340.10" font-size="13" text-anchor="middle" fill="#a8a8a8" font-family="Liberation Sans">0</text><rect x="19" y="286.88" width="7" height="1.5" fill="#b4b4b4"/><rect x="19" y="295.81" width="7" height="1.5" fill="#b4b4b4"/><rect x="19" y="304.74" width="7" height="1.5" fill="#b4b4b4"/><rect x="19" y="313.67" width="7" height="1.5" fill="#b4b4b4"/><rect x="11" y="322.60" width="15" height="1.5" fill="#b4b4b4"/><rect x="19" y="331.53" width="7" height="1.5" fill="#b4b4b4"/><rect x="19" y="340.46" width="7" height="1.5" fill="#b4b4b4"/><rect x="19" y="349.39" width="7" height="1.5" fill="#b4b4b4"/><rect x="19" y="358.32" width="7" height="1.5" fill="#b4b4b4"/><rect x="2" y="367.25" width="24" height="1.5" fill="#b4b4b4"/><rect x="12" y="379.00" width="4" height="2" fill="#a8a8a8"/><text x="14" y="398.20" font-size="13" text-anchor="middle" fill="#a8a8a8" font-family="Liberation Sans">4</text><text x="14" y="413.80" font-size="13" text-anchor="middle" fill="#a8a8a8" font-family="Liberation Sans">2</text><text x="14" y="429.40" font-size="13" text-anchor="middle" fill="#a8a8a8" font-family="Liberation Sans">5</text><rect x="19" y="376.18" width="7" height="1.5" fill="#b4b4b4"/><rect x="19" y="385.11" width="7" height="1.5" fill="#b4b4b4"/><rect x="19" y="394.04" width="7" height="1.5" fill="#b4b4b4"/><rect x="19" y="402.97" width="7" height="1.5" fill="#b4b4b4"/><rect x="11" y="411.90" width="15" height="1.5" fill="#b4b4b4"/><rect x="19" y="420.83" width="7" height="1.5" fill="#b4b4b4"/><rect x="19" y="429.76" width="7" height="1.5" fill="#b4b4b4"/><rect x="19" y="438.69" width="7" height="1.5" fill="#b4b4b4"/><rect x="19" y="447.62" width="7" height="1.5" fill="#b4b4b4"/><rect x="2" y="456.55" width="24" height="1.5" fill="#b4b4b4"/><rect x="12" y="468.30" width="4" height="2" fill="#a8a8a8"/><text x="14" y="487.50" font-size="13" text-anchor="middle" fill="#a8a8a8" font-family="Liberation Sans">4</text><text x="14" y="503.10" font-size="13" text-anchor="middle" fill="#a8a8a8" font-family="Liberation Sans">0</text><text x="14" y="518.70" font-size="13" text-anchor="middle" fill="#a8a8a8" font-family="Liberation Sans">0</text><rect x="19" y="465.48" width="7" height="1.5" fill="#b4b4b4"/><rect x="19" y="474.41" width="7" height="1.5" fill="#b4b4b4"/><rect x="19" y="483.34" width="7" height="1.5" fill="#b4b4b4"/><rect x="19" y="492.27" width="7" height="1.5" fill="#b4b4b4"/><rect x="11" y="501.20" width="15" height="1.5" fill="#b4b4b4"/><rect x="19" y="510.13" width="7" height="1.5" fill="#b4b4b4"/><rect x="19" y="519.06" width="7" height="1.5" fill="#b4b4b4"/><rect x="19" y="527.99" width="7" height="1.5" fill="#b4b4b4"/><rect x="19" y="536.92" width="7" height="1.5" fill="#b4b4b4"/><rect x="2" y="545.85" width="24" height="1.5" fill="#b4b4b4"/><rect x="12" y="557.60" width="4" height="2" fill="#a8a8a8"/><text x="14" y="576.80" font-size="13" text-anchor="middle" fill="#a8a8a8" font-family="Liberation Sans">3</text><text x="14" y="592.40" font-size="13" text-anchor="middle" fill="#a8a8a8" font-family="Liberation Sans">7</text><text x="14" y="608.00" font-size="13" text-anchor="middle" fill="#a8a8a8" font-family="Liberation Sans">5</text><rect x="19" y="554.78" width="7" height="1.5" fill="#b4b4b4"/><rect x="19" y="563.71" width="7" height="1.5" fill="#b4b4b4"/><rect x="19" y="572.64" width="7" height="1.5" fill="#b4b4b4"/><rect x="19" y="581.57" width="7" height="1.5" fill="#b4b4b4"/><rect x="11" y="590.50" width="15" height="1.5" fill="#b4b4b4"/><rect x="19" y="599.43" width="7" height="1.5" fill="#b4b4b4"/><rect x="19" y="608.36" width="7" height="1.5" fill="#b4b4b4"/><rect x="19" y="617.29" width="7" height="1.5" fill="#b4b4b4"/><rect x="19" y="626.22" width="7" height="1.5" fill="#b4b4b4"/><rect x="2" y="635.15" width="24" height="1.5" fill="#b4b4b4"/><rect x="12" y="646.90" width="4" height="2" fill="#a8a8a8"/><text x="14" y="666.10" font-size="13" text-anchor="middle" fill="#a8a8a8" font-family="Liberation Sans">3</text><text x="14" y="681.70" font-size="13" text-anchor="middle" fill="#a8a8a8" font-family="Liberation Sans">5</text><text x="14" y="697.30" font-size="13" text-anchor="middle" fill="#a8a8a8" font-family="Liberation Sans">0</text><rect x="19" y="644.08" width="7" height="1.5" fill="#b4b4b4"/><rect x="19" y="653.01" width="7" height="1.5" fill="#b4b4b4"/><rect x="19" y="661.94" width="7" height="1.5" fill="#b4b4b4"/><rect x="19" y="670.87" width="7" height="1.5" fill="#b4b4b4"/><rect x="11" y="679.80" width="15" height="1.5" fill="#b4b4b4"/><rect x="19" y="688.73" width="7" height="1.5" fill="#b4b4b4"/><rect x="19" y="697.66" width="7" height="1.5" fill="#b4b4b4"/><rect x="19" y="706.59" width="7" height="1.5" fill="#b4b4b4"/><rect x="19" y="715.52" width="7" height="1.5" fill="#b4b4b4"/><rect x="2" y="724.45" width="24" height="1.5" fill="#b4b4b4"/><rect x="12" y="736.20" width="4" height="2" fill="#a8a8a8"/><text x="14" y="755.40" font-size="13" text-anchor="middle" fill="#a8a8a8" font-family="Liberation Sans">3</text><text x="14" y="771.00" font-size="13" text-anchor="middle" fill="#a8a8a8" font-family="Liberation Sans">2</text><text x="14" y="786.60" font-size="13" text-anchor="middle" fill="#a8a8a8" font-family="Liberation Sans">5</text><rect x="19" y="733.38" width="7" height="1.5" fill="#b4b4b4"/><rect x="19" y="742.31" width="7" height="1.5" fill="#b4b4b4"/><rect x="19" y="751.24" width="7" height="1.5" fill="#b4b4b4"/><rect x="19" y="760.17" width="7" height="1.5" fill="#b4b4b4"/><rect x="11" y="769.10" width="15" height="1.5" fill="#b4b4b4"/><rect x="19" y="778.03" width="7" height="1.5" fill="#b4b4b4"/><rect x="19" y="786.96" width="7" height="1.5" fill="#b4b4b4"/><rect x="19" y="795.89" width="7" height="1.5" fill="#b4b4b4"/><rect x="19" y="804.82" width="7" height="1.5" fill="#b4b4b4"/><rect x="2" y="813.75" width="24" height="1.5" fill="#b4b4b4"/><rect x="12" y="825.50" width="4" height="2" fill="#a8a8a8"/><text x="14" y="844.70" font-size="13" text-anchor="middle" fill="#a8a8a8" font-family="Liberation Sans">3</text><text x="14" y="860.30" font-size="13" text-anchor="middle" fill="#a8a8a8" font-family="Liberation Sans">0</text><text x="14" y="875.90" font-size="13" text-anchor="middle" fill="#a8a8a8" font-family="Liberation Sans">0</text><rect x="19" y="822.68" width="7" height="1.5" fill="#b4b4b4"/><rect x="19" y="831.61" width="7" height="1.5" fill="#b4b4b4"/><rect x="19" y="840.54" width="7" height="1.5" fill="#b4b4b4"/><rect x="19" y="849.47" width="7" height="1.5" fill="#b4b4b4"/><rect x="11" y="858.40" width="15" height="1.5" fill="#b4b4b4"/><rect x="19" y="867.33" width="7" height="1.5" fill="#b4b4b4"/><rect x="19" y="876.26" width="7" height="1.5" fill="#b4b4b4"/><rect x="19" y="885.19" width="7" height="1.5" fill="#b4b4b4"/><rect x="19" y="894.12" width="7" height="1.5" fill="#b4b4b4"/><rect x="2" y="903.05" width="24" height="1.5" fill="#b4b4b4"/><rect x="12" y="914.80" width="4" height="2" fill="#a8a8a8"/><text x="14" y="934.00" font-size="13" text-anchor="middle" fill="#a8a8a8" font-family="Liberation Sans">2</text><text x="14" y="949.60" font-size="13" text-anchor="middle" fill="#a8a8a8" font-family="Liberation Sans">7</text><text x="14" y="965.20" font-size="13" text-anchor="middle" fill="#a8a8a8" font-family="Liberation Sans">5</text><rect x="19" y="911.98" width="7" height="1.5" fill="#b4b4b4"/><rect x="19" y="920.91" width="7" height="1.5" fill="#b4b4b4"/><rect x="19" y="929.84" width="7" height="1.5" fill="#b4b4b4"/><rect x="19" y="938.77" width="7" height="1.5" fill="#b4b4b4"/><rect x="11" y="947.70" width="15" height="1.5" fill="#b4b4b4"/><rect x="19" y="956.63" width="7" height="1.5" fill="#b4b4b4"/><rect x="19" y="965.56" width="7" height="1.5" fill="#b4b4b4"/><rect x="19" y="974.49" width="7" height="1.5" fill="#b4b4b4"/><rect x="19" y="983.42" width="7" height="1.5" fill="#b4b4b4"/><rect x="2" y="992.35" width="24" height="1.5" fill="#b4b4b4"/><rect x="12" y="1004.10" width="4" height="2" fill="#a8a8a8"/><text x="14" y="1023.30" font-size="13" text-anchor="middle" fill="#a8a8a8" font-family="Liberation Sans">2</text><text x="14" y="1038.90" font-size="13" text-anchor="middle" fill="#a8a8a8" font-family="Liberation Sans">5</text><text x="14" y="1054.50" font-size="13" text-anchor="middle" fill="#a8a8a8" font-family="Liberation Sans">0</text><rect x="19" y="1001.28" width="7" height="1.5" fill="#b4b4b4"/><rect x="19" y="1010.21" width="7" height="1.5" fill="#b4b4b4"/><rect x="19" y="1019.14" width="7" height="1.5" fill="#b4b4b4"/><rect x="19" y="1028.07" width="7" height="1.5" fill="#b4b4b4"/><rect x="11" y="1037.00" width="15" height="1.5" fill="#b4b4b4"/><rect x="19" y="1045.93" width="7" height="1.5" fill="#b4b4b4"/><rect x="19" y="1054.86" width="7" height="1.5" fill="#b4b4b4"/><rect x="19" y="1063.79" width="7" height="1.5" fill="#b4b4b4"/><rect x="19" y="1072.72" width="7" height="1.5" fill="#b4b4b4"/><rect x="2" y="1081.65" width="24" height="1.5" fill="#b4b4b4"/><rect x="12" y="1093.40" width="4" height="2" fill="#a8a8a8"/><text x="14" y="1112.60" font-size="13" text-anchor="middle" fill="#a8a8a8" font-family="Liberation Sans">2</text><text x="14" y="1128.20" font-size="13" text-anchor="middle" fill="#a8a8a8" font-family="Liberation Sans">2</text><text x="14" y="1143.80" font-size="13" text-anchor="middle" fill="#a8a8a8" font-family="Liberation Sans">5</text><rect x="19" y="1090.58" width="7" height="1.5" fill="#b4b4b4"/><rect x="19" y="1099.51" width="7" height="1.5" fill="#b4b4b4"/></svg>
<svg style="position:absolute;left:60px;top:1018px;" width="10" height="16" viewBox="0 0 10 16"><path d="M0 2 L0 14 L8 8 Z" fill="#bbb"/></svg>
<div style="position:absolute;left:47px;top:89px;width:22px;height:33px;background:#2c2c2c;border-radius:5px;border:1px solid #252525"></div>
<svg style="position:absolute;left:49px;top:96px;" width="18" height="20" viewBox="0 0 18 20"><rect x="3" y="8" width="12" height="10" rx="1" fill="#f0f0f0"/><path d="M5.5 8 V5.5 a3.5 3.5 0 0 1 7 0 V8" stroke="#f0f0f0" stroke-width="2.2" fill="none"/></svg>
<div style="position:absolute;left:9.5px;top:7.5px;font-size:15.6px;line-height:18px;color:#e6e6e6;white-space:nowrap;">File</div>
<div style="position:absolute;left:55px;top:7.5px;font-size:15.6px;line-height:18px;color:#e6e6e6;white-space:nowrap;">Edit</div>
<div style="position:absolute;left:103px;top:7.5px;font-size:15.6px;line-height:18px;color:#e6e6e6;white-space:nowrap;">View</div>
<div style="position:absolute;left:158px;top:7.5px;font-size:15.6px;line-height:18px;color:#e6e6e6;white-space:nowrap;">Layer</div>
<div style="position:absolute;left:216.5px;top:7.5px;font-size:15.6px;line-height:18px;color:#e6e6e6;white-space:nowrap;">Object</div>
<div style="position:absolute;left:284.75px;top:7.5px;font-size:15.6px;line-height:18px;color:#e6e6e6;white-space:nowrap;">Path</div>
<div style="position:absolute;left:336.5px;top:7.5px;font-size:15.6px;line-height:18px;color:#e6e6e6;white-space:nowrap;">Text</div>
<div style="position:absolute;left:386px;top:7.5px;font-size:15.6px;line-height:18px;color:#e6e6e6;white-space:nowrap;">Filters</div>
<div style="position:absolute;left:448.5px;top:7.5px;font-size:15.6px;line-height:18px;color:#e6e6e6;white-space:nowrap;">Extensions</div>
<div style="position:absolute;left:544.5px;top:7.5px;font-size:15.6px;line-height:18px;color:#e6e6e6;white-space:nowrap;">Help</div>
<svg style="position:absolute;left:18px;top:49px;" width="22" height="22" viewBox="0 0 22 22"><rect x="1" y="1" width="20" height="20" fill="none" stroke="#ececec" stroke-width="1.6" stroke-dasharray="1.6 1.2"/><circle cx="14" cy="8" r="4.5" fill="#ececec"/><rect x="4" y="12" width="9" height="7" fill="#ececec"/></svg>
<svg style="position:absolute;left:67px;top:49px;" width="22" height="22" viewBox="0 0 22 22"><rect x="1" y="1" width="20" height="20" fill="none" stroke="#ececec" stroke-width="1.6" stroke-dasharray="1.6 1.2"/><path d="M5 7 Q11 3 17 5 L17 8 Q11 6 5 10Z M5 12 Q11 8 17 10 L17 13 Q11 11 5 15Z M5 17 Q11 13 17 15 L17 18 Q11 16 5 20Z" fill="#ececec"/></svg>
<svg style="position:absolute;left:116px;top:49px;" width="22" height="22" viewBox="0 0 22 22"><rect x="1" y="1" width="20" height="20" fill="none" stroke="#555" stroke-width="1.4"/><circle cx="13" cy="9" r="4.5" fill="#666"/><rect x="4" y="12" width="9" height="7" fill="#666"/></svg>
<svg style="position:absolute;left:166px;top:49px;" width="24" height="22" viewBox="0 0 24 22"><rect x="2" y="5" width="14" height="15" fill="none" stroke="#ececec" stroke-width="1.6" stroke-dasharray="2 1.5"/><rect x="16" y="1" width="7" height="7" fill="#ececec"/></svg>
<div style="position:absolute;left:210px;top:40px;width:1px;height:42px;background:#333"></div>
<svg style="position:absolute;left:234px;top:49px;" width="23" height="23" viewBox="0 0 23 23"><rect x="13" y="1" width="7" height="13" fill="#858585"/><rect x="1" y="16" width="14" height="6" fill="#858585"/><path d="M3 13 Q3 4 10 3" stroke="#357a35" stroke-width="2" fill="none"/><path d="M1 10 L3 14 L6 10Z" fill="#357a35"/></svg>
<svg style="position:absolute;left:283px;top:49px;" width="23" height="23" viewBox="0 0 23 23"><rect x="2" y="1" width="7" height="13" fill="#858585"/><rect x="8" y="16" width="14" height="6" fill="#858585"/><path d="M20 13 Q20 4 13 3" stroke="#357a35" stroke-width="2" fill="none"/><path d="M22 10 L20 14 L17 10Z" fill="#357a35"/></svg>
<svg style="position:absolute;left:334px;top:49px;" width="22" height="23" viewBox="0 0 22 23"><path d="M9 2 L1 20 L9 20Z" fill="#6a6a6a"/><path d="M12 2 L21 20 L12 20Z" fill="#858585"/><line x1="10.5" y1="0" x2="10.5" y2="23" stroke="#9a9a9a" stroke-dasharray="2 1.5"/></svg>
<svg style="position:absolute;left:383px;top:49px;" width="22" height="23" viewBox="0 0 22 23"><path d="M2 2 L20 10 L2 10Z" fill="#6a6a6a"/><path d="M2 13 L20 13 L2 22Z" fill="#858585"/><line x1="0" y1="11.5" x2="22" y2="11.5" stroke="#9a9a9a" stroke-dasharray="2 1.5"/></svg>
<div style="position:absolute;left:428px;top:40px;width:1px;height:42px;background:#333"></div>
<svg style="position:absolute;left:451px;top:49px;" width="20" height="23" viewBox="0 0 20 23"><rect x="0" y="2" width="18" height="2.5" fill="#8a8a8a"/><rect x="0" y="8" width="6" height="2" fill="#7a7a7a"/><rect x="0" y="13" width="6" height="2" fill="#7a7a7a"/><rect x="0" y="18" width="6" height="2" fill="#7a7a7a"/><path d="M12 22 V8 M9 11 L12 7 L15 11" stroke="#357a35" stroke-width="1.8" fill="none"/></svg>
<svg style="position:absolute;left:500px;top:49px;" width="20" height="23" viewBox="0 0 20 23"><rect x="0" y="2" width="6" height="2" fill="#7a7a7a"/><rect x="0" y="8" width="18" height="2.5" fill="#8a8a8a"/><rect x="0" y="13" width="6" height="2" fill="#7a7a7a"/><rect x="0" y="18" width="6" height="2" fill="#7a7a7a"/><path d="M13 22 V13 M10 16 L13 12 L16 16" stroke="#357a35" stroke-width="1.8" fill="none"/></svg>
<svg style="position:absolute;left:550px;top:49px;" width="20" height="23" viewBox="0 0 20 23"><rect x="0" y="2" width="6" height="2" fill="#7a7a7a"/><rect x="0" y="7" width="6" height="2" fill="#7a7a7a"/><rect x="0" y="12" width="18" height="2.5" fill="#8a8a8a"/><rect x="0" y="18" width="6" height="2" fill="#7a7a7a"/><path d="M13 1 V10 M10 7 L13 11 L16 7" stroke="#357a35" stroke-width="1.8" fill="none"/></svg>
<svg style="position:absolute;left:599px;top:49px;" width="20" height="23" viewBox="0 0 20 23"><rect x="0" y="2" width="6" height="2" fill="#7a7a7a"/><rect x="0" y="7" width="6" height="2" fill="#7a7a7a"/><rect x="0" y="12" width="6" height="2" fill="#7a7a7a"/><rect x="0" y="19" width="18" height="2.5" fill="#8a8a8a"/><path d="M13 1 V16 M10 13 L13 17 L16 13" stroke="#357a35" stroke-width="1.8" fill="none"/></svg>
<div style="position:absolute;left:640px;top:40px;width:1px;height:42px;background:#333"></div>
<div class="" style="position:absolute;left:657px;top:52.76px;font-size:16px;line-height:16px;color:#a2a2a2;font-weight:normal;white-space:nowrap;">X:</div>
<div style="position:absolute;left:675px;top:38.6px;width:146px;height:43.99999999999999px;background:#333333;border:1px solid #262626;border-radius:7px"></div>
<div style="position:absolute;left:775.5px;top:39.6px;width:1px;height:41.99999999999999px;background:#2d2d2d"></div>
<div style="position:absolute;left:797.5px;top:39.6px;width:1px;height:41.99999999999999px;background:#2d2d2d"></div>
<div class="" style="position:absolute;left:684px;top:53.18px;font-size:15.5px;line-height:15.5px;color:#a8a8a8;font-weight:normal;white-space:nowrap;letter-spacing:-0.2px">-200.275</div>
<div style="position:absolute;left:777.5px;top:60.099999999999994px;width:18px;height:1.5px;background:#5e5e5e"></div>
<div style="position:absolute;left:800.25px;top:60.099999999999994px;width:18px;height:1.5px;background:#5e5e5e"></div>
<div style="position:absolute;left:808.5px;top:51.599999999999994px;width:1.5px;height:18px;background:#5e5e5e"></div>
<div class="" style="position:absolute;left:830px;top:52.76px;font-size:16px;line-height:16px;color:#a2a2a2;font-weight:normal;white-space:nowrap;">Y:</div>
<div style="position:absolute;left:848px;top:38.6px;width:145px;height:43.99999999999999px;background:#333333;border:1px solid #262626;border-radius:7px"></div>
<div style="position:absolute;left:947.5px;top:39.6px;width:1px;height:41.99999999999999px;background:#2d2d2d"></div>
<div style="position:absolute;left:969.5px;top:39.6px;width:1px;height:41.99999999999999px;background:#2d2d2d"></div>
<div class="" style="position:absolute;left:857px;top:53.18px;font-size:15.5px;line-height:15.5px;color:#a8a8a8;font-weight:normal;white-space:nowrap;letter-spacing:-0.2px">-472.792</div>
<div style="position:absolute;left:949.5px;top:60.099999999999994px;width:18px;height:1.5px;background:#5e5e5e"></div>
<div style="position:absolute;left:972.25px;top:60.099999999999994px;width:18px;height:1.5px;background:#5e5e5e"></div>
<div style="position:absolute;left:980.5px;top:51.599999999999994px;width:1.5px;height:18px;background:#5e5e5e"></div>
<div class="" style="position:absolute;left:1003px;top:52.76px;font-size:16px;line-height:16px;color:#a2a2a2;font-weight:normal;white-space:nowrap;">W:</div>
<div style="position:absolute;left:1027px;top:38.6px;width:139.5px;height:43.99999999999999px;background:#333333;border:1px solid #262626;border-radius:7px"></div>
<div style="position:absolute;left:1121px;top:39.6px;width:1px;height:41.99999999999999px;background:#2d2d2d"></div>
<div style="position:absolute;left:1143.7px;top:39.6px;width:1px;height:41.99999999999999px;background:#2d2d2d"></div>
<div class="" style="position:absolute;left:1036px;top:53.18px;font-size:15.5px;line-height:15.5px;color:#a8a8a8;font-weight:normal;white-space:nowrap;letter-spacing:-0.2px">119.062</div>
<div style="position:absolute;left:1123.35px;top:60.099999999999994px;width:18px;height:1.5px;background:#5e5e5e"></div>
<div style="position:absolute;left:1146.1px;top:60.099999999999994px;width:18px;height:1.5px;background:#5e5e5e"></div>
<div style="position:absolute;left:1154.35px;top:51.599999999999994px;width:1.5px;height:18px;background:#5e5e5e"></div>
<svg style="position:absolute;left:1187px;top:50px;" width="22" height="22" viewBox="0 0 22 22"><rect x="1" y="10" width="13" height="11" rx="1" fill="#ececec"/><path d="M11 10 V6 a4 4 0 0 1 8 0 V8" stroke="#ececec" stroke-width="2.4" fill="none"/></svg>
<div class="" style="position:absolute;left:1225px;top:52.76px;font-size:16px;line-height:16px;color:#a2a2a2;font-weight:normal;white-space:nowrap;">H:</div>
<div style="position:absolute;left:1246px;top:38.6px;width:138.4000000000001px;height:43.99999999999999px;background:#333333;border:1px solid #262626;border-radius:7px"></div>
<div style="position:absolute;left:1338.5px;top:39.6px;width:1px;height:41.99999999999999px;background:#2d2d2d"></div>
<div style="position:absolute;left:1362px;top:39.6px;width:1px;height:41.99999999999999px;background:#2d2d2d"></div>
<div class="" style="position:absolute;left:1255px;top:53.18px;font-size:15.5px;line-height:15.5px;color:#a8a8a8;font-weight:normal;white-space:nowrap;letter-spacing:-0.2px">160.217</div>
<div style="position:absolute;left:1341.25px;top:60.099999999999994px;width:18px;height:1.5px;background:#5e5e5e"></div>
<div style="position:absolute;left:1364.2px;top:60.099999999999994px;width:18px;height:1.5px;background:#5e5e5e"></div>
<div style="position:absolute;left:1372.45px;top:51.599999999999994px;width:1.5px;height:18px;background:#5e5e5e"></div>
<div style="position:absolute;left:1391px;top:38.6px;width:79px;height:44px;background:#353535;border:1px solid #262626;border-radius:7px"></div>
<div class="" style="position:absolute;left:1407px;top:51.91px;font-size:17px;line-height:17px;color:#dcdcdc;font-weight:normal;white-space:nowrap;">mm</div>
<svg style="position:absolute;left:1439px;top:54px;" width="18" height="12" viewBox="0 0 18 12"><path d="M1 1 L17 1 L9 10Z" fill="#eee"/></svg>
<div style="position:absolute;left:1490.7px;top:38.4px;width:47.0px;height:44.5px;background:#232323;border-radius:7px"></div>
<div style="position:absolute;left:1540.5px;top:38.4px;width:46.5px;height:44.5px;background:#232323;border-radius:7px"></div>
<div style="position:absolute;left:1589.7px;top:38.4px;width:46.299999999999955px;height:44.5px;background:#232323;border-radius:7px"></div>
<div style="position:absolute;left:1639px;top:38.4px;width:47px;height:44.5px;background:#232323;border-radius:7px"></div>
<svg style="position:absolute;left:1502px;top:48px;" width="24" height="24" viewBox="0 0 24 24"><rect x="4" y="2" width="14" height="2.4" fill="#ececec"/><rect x="12" y="2" width="2.4" height="9" fill="#ececec"/><rect x="4" y="7" width="8" height="2.4" fill="#ececec"/><rect x="3" y="16" width="3" height="3" fill="#ececec"/><rect x="8" y="16" width="3" height="3" fill="#ececec"/><rect x="13" y="16" width="3" height="3" fill="#ececec"/><path d="M16 14.5 L21 17.5 L16 20.5Z" fill="#ececec"/><rect x="13" y="16.3" width="5" height="2.4" fill="#ececec"/></svg>
<svg style="position:absolute;left:1552px;top:48px;" width="24" height="24" viewBox="0 0 24 24"><path d="M4 3 H12 Q18 3 18 10" stroke="#ececec" stroke-width="2.3" fill="none"/><path d="M4 8 H11 Q13 8 13 11" stroke="#ececec" stroke-width="2.3" fill="none"/><rect x="3" y="16" width="3" height="3" fill="#ececec"/><rect x="8" y="16" width="3" height="3" fill="#ececec"/><rect x="13" y="16" width="3" height="3" fill="#ececec"/><path d="M16 14.5 L21 17.5 L16 20.5Z" fill="#ececec"/><rect x="13" y="16.3" width="5" height="2.4" fill="#ececec"/></svg>
<svg style="position:absolute;left:1601px;top:48px;" width="24" height="24" viewBox="0 0 24 24"><rect x="4" y="1" width="15" height="10" fill="#5a9ad6"/><rect x="4" y="1" width="15" height="3" fill="#9cd0f5"/><rect x="18" y="1" width="2" height="11" fill="#ececec"/><rect x="3" y="16" width="3" height="3" fill="#ececec"/><rect x="8" y="16" width="3" height="3" fill="#ececec"/><rect x="13" y="16" width="3" height="3" fill="#ececec"/><path d="M16 14.5 L21 17.5 L16 20.5Z" fill="#ececec"/><rect x="13" y="16.3" width="5" height="2.4" fill="#ececec"/></svg>
<svg style="position:absolute;left:1650px;top:48px;" width="24" height="24" viewBox="0 0 24 24"><path d="M4 2 H19 V11" stroke="#ececec" stroke-width="2" fill="none"/><path d="M6 4 L9 7 L6 10 M10 4 L13 7 L10 10" stroke="#7ab8e8" stroke-width="1.4" fill="none"/><rect x="3" y="16" width="3" height="3" fill="#ececec"/><rect x="8" y="16" width="3" height="3" fill="#ececec"/><rect x="13" y="16" width="3" height="3" fill="#ececec"/><path d="M16 14.5 L21 17.5 L16 20.5Z" fill="#ececec"/><rect x="13" y="16.3" width="5" height="2.4" fill="#ececec"/></svg>
<div style="position:absolute;left:2458px;top:38.8px;width:46.5px;height:44.2px;background:#232323;border-radius:7px"></div>
<svg style="position:absolute;left:2468px;top:47px;" width="26" height="26" viewBox="0 0 26 26"><path d="M13 3 A9 9 0 0 1 13 21" stroke="#ececec" stroke-width="4" fill="none"/><rect x="11" y="1" width="3" height="4" fill="#4caf50"/><rect x="11" y="19" width="3" height="4" fill="#4caf50"/><text x="5" y="16" font-size="10" font-weight="bold" fill="#ececec" font-family="Liberation Sans">$</text></svg>
<div style="position:absolute;left:2507.7px;top:38.8px;width:46px;height:44.2px;background:#3c3c3c;border:1px solid #2a2a2a;border-radius:7px"></div>
<svg style="position:absolute;left:2522px;top:49px;" width="16" height="22" viewBox="0 0 16 22"><path d="M12 2 L3 11 L12 20Z" fill="#eee"/></svg>
<div style="position:absolute;left:0px;top:89px;width:42px;height:42px;background:#222;border-radius:8px"></div>
<svg style="position:absolute;left:10.0px;top:99.0px;" width="22" height="22" viewBox="0 0 22 22"><path d="M4 2 L18 9 L12 11 L17 17 L14 20 L9 14 L5 19Z" fill="#111" stroke="#ececec" stroke-width="2.2" stroke-linejoin="round"/></svg>
<svg style="position:absolute;left:10.0px;top:143.0px;" width="22" height="22" viewBox="0 0 22 22"><rect x="3" y="2" width="7" height="7" fill="none" stroke="#ececec" stroke-width="2"/><path d="M10 4 Q16 1 21 2" stroke="#bbb" stroke-width="1.4" fill="none"/><path d="M6 9 Q3 15 4 20" stroke="#bbb" stroke-width="1.4" fill="none"/><path d="M12 11 L21 16 L13 20Z" fill="#ececec"/></svg>
<svg style="position:absolute;left:10.0px;top:186.0px;" width="22" height="22" viewBox="0 0 22 22"><rect x="2.5" y="2.5" width="17" height="17" rx="2" fill="#d63b9e" stroke="#ececec" stroke-width="2.6"/></svg>
<svg style="position:absolute;left:10.0px;top:229.0px;" width="22" height="22" viewBox="0 0 22 22"><circle cx="11" cy="11" r="8.5" fill="#c0368e" stroke="#ececec" stroke-width="2.6"/></svg>
<svg style="position:absolute;left:10.0px;top:273.0px;" width="22" height="22" viewBox="0 0 22 22"><path d="M2 8 L8 3 L13 7 L11 14 L4 14Z" fill="#d63b9e" stroke="#ececec" stroke-width="2" stroke-linejoin="round"/><path d="M15 10 L17 14 L21 14 L18 17 L19 21 L15 19 L11 21 L12 17 L9 14 L13 14Z" fill="#d63b9e" stroke="#ececec" stroke-width="1.8" stroke-linejoin="round"/></svg>
<svg style="position:absolute;left:10.0px;top:315.0px;" width="22" height="22" viewBox="0 0 22 22"><path d="M11 2 L20 6.5 L20 16 L11 20.5 L2 16 L2 6.5Z" fill="#d63b9e" stroke="#ececec" stroke-width="2.2" stroke-linejoin="round"/><path d="M2 6.5 L11 11 L20 6.5 M11 11 V20.5" stroke="#ececec" stroke-width="2" fill="none"/><path d="M3 7 L11 3 L19 7 L11 10.5Z" fill="#ffd6f0"/></svg>
<svg style="position:absolute;left:10.0px;top:357.0px;" width="22" height="22" viewBox="0 0 22 22"><path d="M11 11 a2 2 0 0 1 4 0 a4 4 0 0 1 -8 0 a6 6 0 0 1 12 0 a8 8 0 0 1 -16 0" stroke="#ececec" stroke-width="2.3" fill="none" transform="translate(0 0)"/></svg>
<div style="position:absolute;left:6px;top:390px;width:32px;height:1px;background:#3e3e3e"></div>
<svg style="position:absolute;left:10.0px;top:401.0px;" width="22" height="22" viewBox="0 0 22 22"><circle cx="4" cy="3" r="2" fill="#4caf50"/><circle cx="4" cy="19" r="2" fill="#4caf50"/><path d="M4 5 Q2 12 4 17" stroke="#4caf50" stroke-width="1.4" fill="none"/><path d="M9 14 L16 6 L21 11 L13 19 L8 20Z" fill="#ececec"/><circle cx="13" cy="14" r="1.5" fill="#333"/></svg>
<svg style="position:absolute;left:10.0px;top:444.0px;" width="22" height="22" viewBox="0 0 22 22"><path d="M2 20 Q8 16 4 13 Q1 10 7 6" stroke="#4caf50" stroke-width="1.8" fill="none"/><path d="M8 18 L18 6 L21 9 L11 21 L7 21Z" fill="#ececec"/></svg>
<svg style="position:absolute;left:10.0px;top:486.0px;" width="22" height="22" viewBox="0 0 22 22"><path d="M2 13 Q8 10 5 16 Q3 20 9 19" stroke="#4caf50" stroke-width="1.8" fill="none"/><path d="M9 16 L19 3 L21 5 L11 18Z" fill="#ececec"/></svg>
<svg style="position:absolute;left:10.0px;top:530.0px;" width="22" height="22" viewBox="0 0 22 22"><path d="M1 20 L8 2 L11 2 L18 20 L14 20 L12.5 15.5 L6.5 15.5 L5 20Z M7.5 12 L11.5 12 L9.5 6Z" fill="#ececec" fill-rule="evenodd"/><rect x="19" y="1" width="2.5" height="20" fill="#4caf50"/></svg>
<svg style="position:absolute;left:10.0px;top:573.0px;" width="22" height="22" viewBox="0 0 22 22"><defs><linearGradient id="gr1" x1="0" y1="0" x2="1" y2="1"><stop offset="0" stop-color="#2f7fd0"/><stop offset="1" stop-color="#dff1ff"/></linearGradient></defs><rect x="2" y="2" width="18" height="18" fill="url(#gr1)" stroke="#ececec" stroke-width="2"/></svg>
<div style="position:absolute;left:6px;top:605px;width:32px;height:1px;background:#3e3e3e"></div>
<svg style="position:absolute;left:10.0px;top:616.0px;" width="22" height="22" viewBox="0 0 22 22"><rect x="2" y="2" width="18" height="18" fill="#3d8fd8" stroke="#ececec" stroke-width="2"/><path d="M2 11 Q7 6 11 11 Q15 16 20 11 M11 2 Q6 7 11 11 Q16 15 11 20" stroke="#ececec" stroke-width="1.6" fill="none"/></svg>
<svg style="position:absolute;left:10.0px;top:660.0px;" width="22" height="22" viewBox="0 0 22 22"><path d="M5 1 Q2 6 5 8 Q8 6 5 1Z" fill="#4a9fe6"/><path d="M4 21 L3 19 L13 9 L15 11 L5 21Z" fill="#ececec"/><path d="M12 8 L17 3 Q20 1 21 4 Q21 6 19 7 L14 12Z" fill="#ececec"/></svg>
<svg style="position:absolute;left:10.0px;top:703.0px;" width="22" height="22" viewBox="0 0 22 22"><path d="M4 10 Q1 15 4 17 Q7 15 4 10Z" fill="#4a9fe6"/><path d="M8 6 L15 1 L21 9 L13 16Z" fill="#ececec"/></svg>
<div style="position:absolute;left:6px;top:736px;width:32px;height:1px;background:#3e3e3e"></div>
<svg style="position:absolute;left:10.0px;top:748.0px;" width="22" height="22" viewBox="0 0 22 22"><path d="M2 19 Q2 12 6 10 Q9 8 10 12 Q13 5 18 5 L20 7 Q16 9 18 12 L20 12 L20 19Z" fill="#ececec"/></svg>
<svg style="position:absolute;left:10.0px;top:790.0px;" width="22" height="22" viewBox="0 0 22 22"><circle cx="4" cy="3" r="1.2" fill="#ccc"/><circle cx="7" cy="6" r="1.2" fill="#ccc"/><circle cx="3" cy="8" r="1.2" fill="#ccc"/><rect x="9" y="9" width="11" height="12" rx="1" fill="#ececec"/><rect x="12" y="4" width="5" height="5" fill="#ececec"/></svg>
<svg style="position:absolute;left:10.0px;top:832.0px;" width="22" height="22" viewBox="0 0 22 22"><path d="M8 12 L15 3 L21 8 L14 16Z" fill="#ececec"/><path d="M6 14 L10 18" stroke="#ececec" stroke-width="2.5"/><rect x="1" y="19" width="9" height="2" fill="#ececec"/><rect x="13" y="19" width="8" height="2" fill="#ececec"/></svg>
<svg style="position:absolute;left:10.0px;top:876.0px;" width="22" height="22" viewBox="0 0 22 22"><path d="M2 6 L7 5 L13 14 L17 13" stroke="#ececec" stroke-width="2.6" fill="none" stroke-linejoin="round"/><path d="M14 9 L21 13 L16 19Z" fill="#ececec"/></svg>
<div style="position:absolute;left:6px;top:908px;width:32px;height:1px;background:#3e3e3e"></div>
<svg style="position:absolute;left:10.0px;top:919.0px;" width="22" height="22" viewBox="0 0 22 22"><path d="M4 1 H15 L19 5 V21 H4Z" fill="none" stroke="#ececec" stroke-width="2.4"/><path d="M8 7 H11 M8 11 H11 M8 15 H11" stroke="#ececec" stroke-width="1.6"/></svg>
<svg style="position:absolute;left:10.0px;top:963.0px;" width="22" height="22" viewBox="0 0 22 22"><circle cx="9" cy="9" r="6.5" fill="none" stroke="#ececec" stroke-width="2.6"/><path d="M14 14 L20 20" stroke="#ececec" stroke-width="3" stroke-linecap="round"/></svg>
<svg style="position:absolute;left:10.0px;top:1005.0px;" width="22" height="22" viewBox="0 0 22 22"><path d="M7 2 H17 L20 5 V16 H7Z" fill="none" stroke="#ececec" stroke-width="2.2"/><path d="M2 7 H5 M2 7 V21 H14 V18" stroke="#ececec" stroke-width="2.2" fill="none"/></svg>
<div style="position:absolute;left:1864px;top:96px;width:630px;height:49px;background:#242424"></div>
<div style="position:absolute;left:1864px;top:96px;width:12px;height:49px;background:#202020"></div>
<div style="position:absolute;left:1876px;top:96px;width:220px;height:49px;background:#2a2a2a"></div>
<div style="position:absolute;left:1876px;top:137px;width:220px;height:8px;background:#3767b0"></div>
<div style="position:absolute;left:1864px;top:145px;width:630px;height:3px;background:#1d1d1d"></div>
<svg style="position:absolute;left:1890px;top:109px;" width="22" height="20" viewBox="0 0 22 20"><rect x="1" y="0" width="2" height="20" fill="#4caf50"/><rect x="5" y="2" width="9" height="4" fill="#ececec"/><rect x="5" y="8" width="16" height="4" fill="#ececec"/><rect x="5" y="14" width="11" height="4" fill="#ececec"/></svg>
<div class="mt2" style="position:absolute;left:1916px;top:112.53px;font-size:16.5px;line-height:16.5px;color:#ebebeb;font-weight:normal;white-space:nowrap;">Align and Distribute</div>
<svg style="position:absolute;left:2063px;top:114px;" width="14" height="13" viewBox="0 0 14 13"><path d="M1.5 1.5 L12.5 11.5 M12.5 1.5 L1.5 11.5" stroke="#d0d0d0" stroke-width="2.2"/></svg>
<svg style="position:absolute;left:2134px;top:108px;" width="23" height="23" viewBox="0 0 23 23"><path d="M2 21 V2 H17" stroke="#ececec" stroke-width="2" fill="none"/><path d="M9 16 L20 4 L22 6 L11 18Z" fill="#ececec"/><path d="M6 21 L9 16 L11 18Z" fill="#3f8fd8"/></svg>
<svg style="position:absolute;left:2219px;top:108px;" width="24" height="23" viewBox="0 0 24 23"><path d="M9 6 A8 8 0 1 1 10 19" stroke="#ececec" stroke-width="2.6" fill="none"/><path d="M9 1 L4 6 L10 10Z" fill="#ececec"/><circle cx="15" cy="11" r="2.6" fill="#4caf50"/><rect x="1" y="15" width="9" height="7" fill="#ececec"/></svg>
<svg style="position:absolute;left:2305px;top:109px;" width="22" height="21" viewBox="0 0 22 21"><rect x="1" y="1" width="20" height="19" fill="none" stroke="#4caf50" stroke-width="2"/><path d="M4 17 L10 9 L15 17Z" fill="#4caf50"/><circle cx="16" cy="5.5" r="2" fill="#4caf50"/></svg>
<svg style="position:absolute;left:2389px;top:107px;" width="25" height="24" viewBox="0 0 25 24"><path d="M2 1 H11 L16 6 V22 H2Z" fill="none" stroke="#ececec" stroke-width="2.6"/><path d="M9 12 H19" stroke="#4caf50" stroke-width="3"/><path d="M18 7 L24 12 L18 17Z" fill="#4caf50"/></svg>
<div style="position:absolute;left:2454px;top:99.6px;width:35px;height:40px;background:#2a2a2a;border-radius:5px"></div>
<svg style="position:absolute;left:2464px;top:112px;" width="18" height="12" viewBox="0 0 18 12"><path d="M1.5 2 L9 9.5 L16.5 2" stroke="#bdbdbd" stroke-width="2.2" fill="none"/></svg>
<div style="position:absolute;left:1864px;top:148px;width:629px;height:36px;background:#282828"></div>
<div style="position:absolute;left:1876px;top:180px;width:83px;height:7px;background:#3767b0"></div>
<svg style="position:absolute;left:1887px;top:159px;" width="18" height="16" viewBox="0 0 18 16"><rect x="0" y="0" width="1.6" height="16" fill="#4caf50"/><rect x="3" y="1" width="7" height="3" fill="#ececec"/><rect x="3" y="6.5" width="12" height="3" fill="#ececec"/><rect x="3" y="12" width="8" height="3" fill="#ececec"/></svg>
<div class="" style="position:absolute;left:1912px;top:160.46px;font-size:16px;line-height:16px;color:#e6e6e6;font-weight:normal;white-space:nowrap;">Align</div>
<svg style="position:absolute;left:1981px;top:159px;" width="17" height="17" viewBox="0 0 17 17"><rect x="0.0" y="0.0" width="3.4" height="3.4" fill="#ececec"/><rect x="0.0" y="4.3" width="3.4" height="3.4" fill="#ececec"/><rect x="0.0" y="8.6" width="3.4" height="3.4" fill="#ececec"/><rect x="0.0" y="12.899999999999999" width="3.4" height="3.4" fill="#ececec"/><rect x="4.3" y="0.0" width="3.4" height="3.4" fill="#ececec"/><rect x="4.3" y="4.3" width="3.4" height="3.4" fill="#ececec"/><rect x="4.3" y="8.6" width="3.4" height="3.4" fill="#ececec"/><rect x="4.3" y="12.899999999999999" width="3.4" height="3.4" fill="#ececec"/><rect x="8.6" y="0.0" width="3.4" height="3.4" fill="#ececec"/><rect x="8.6" y="4.3" width="3.4" height="3.4" fill="#ececec"/><rect x="8.6" y="8.6" width="3.4" height="3.4" fill="#ececec"/><rect x="8.6" y="12.899999999999999" width="3.4" height="3.4" fill="#ececec"/><rect x="12.899999999999999" y="0.0" width="3.4" height="3.4" fill="#ececec"/><rect x="12.899999999999999" y="4.3" width="3.4" height="3.4" fill="#ececec"/><rect x="12.899999999999999" y="8.6" width="3.4" height="3.4" fill="#ececec"/><rect x="12.899999999999999" y="12.899999999999999" width="3.4" height="3.4" fill="#ececec"/></svg>
<div class="" style="position:absolute;left:2005px;top:160.46px;font-size:16px;line-height:16px;color:#e6e6e6;font-weight:normal;white-space:nowrap;">Grid</div>
<svg style="position:absolute;left:2065px;top:158px;" width="19" height="19" viewBox="0 0 19 19"><circle cx="16.50" cy="9.50" r="2.3" fill="#ececec"/><circle cx="14.45" cy="14.45" r="2.3" fill="#ececec"/><circle cx="9.50" cy="16.50" r="2.3" fill="#ececec"/><circle cx="4.55" cy="14.45" r="2.3" fill="#ececec"/><circle cx="2.50" cy="9.50" r="2.3" fill="#ececec"/><circle cx="4.55" cy="4.55" r="2.3" fill="#ececec"/><circle cx="9.50" cy="2.50" r="2.3" fill="#ececec"/><circle cx="14.45" cy="4.55" r="2.3" fill="#ececec"/></svg>
<div class="" style="position:absolute;left:2091px;top:160.46px;font-size:16px;line-height:16px;color:#e6e6e6;font-weight:normal;white-space:nowrap;">Circular</div>
<div style="position:absolute;left:1864px;top:184px;width:629px;height:556px;background:#2f2f2f"></div>
<div style="position:absolute;left:1864px;top:184px;width:1px;height:556px;background:#262626"></div>
<div style="position:absolute;left:2492px;top:184px;width:1px;height:556px;background:#262626"></div>
<div style="position:absolute;left:1864px;top:739px;width:629px;height:2px;background:#242424"></div>
<div style="position:absolute;left:1865px;top:741px;width:629px;height:516px;background:#333333"></div>
<div class="" style="position:absolute;left:1872px;top:192.46px;font-size:16px;line-height:16px;color:#f0f0f0;font-weight:bold;white-space:nowrap;">Align</div>
<svg style="position:absolute;left:1900px;top:226px;" width="20" height="20" viewBox="0 0 20 20"><rect x="1" y="1" width="18" height="18" fill="none" stroke="#4caf50" stroke-width="1.5" stroke-dasharray="1.5 1.2"/><rect x="5" y="5" width="10" height="10" fill="#ececec"/></svg>
<div class="" style="position:absolute;left:1938px;top:227.96px;font-size:16px;line-height:16px;color:#e8e8e8;font-weight:normal;white-space:nowrap;">Alignment handles with third click</div>
<svg style="position:absolute;left:1900px;top:271px;" width="20" height="20" viewBox="0 0 20 20"><path d="M5 4 H15 M7 10 H14 M5 16 H15" stroke="#ececec" stroke-width="2.2"/><circle cx="2" cy="3" r="1" fill="#4caf50"/><circle cx="18" cy="3" r="1" fill="#4caf50"/><circle cx="2" cy="17" r="1" fill="#4caf50"/><circle cx="18" cy="17" r="1" fill="#4caf50"/></svg>
<div class="" style="position:absolute;left:1938px;top:273.96px;font-size:16px;line-height:16px;color:#e8e8e8;font-weight:normal;white-space:nowrap;">Move/align selection as group</div>
<div class="" style="position:absolute;left:1888px;top:319.88px;font-size:15.5px;line-height:15.5px;color:#dedede;font-weight:normal;white-space:nowrap;">Relative to:</div>
<div style="position:absolute;left:1972px;top:306px;width:144px;height:43px;background:#333333;border:1px solid #232323;border-radius:6px;box-shadow:0 1px 1px #222"></div>
<div class="" style="position:absolute;left:1980px;top:319.88px;font-size:15.5px;line-height:15.5px;color:#e0e0e0;font-weight:normal;white-space:nowrap;">First selected</div>
<svg style="position:absolute;left:2090px;top:321px;" width="17" height="11" viewBox="0 0 17 11"><path d="M1 1 L16 1 L8.5 9.5Z" fill="#eee"/></svg>
<svg style="position:absolute;left:1900px;top:361px;" width="20" height="22" viewBox="0 0 20 22"><rect x="1" y="3.0" width="12" height="4.3" fill="#ececec"/><rect x="1" y="9.3" width="11" height="4.3" fill="#ececec"/><rect x="1" y="15.6" width="12" height="4.3" fill="#ececec"/><rect x="14" y="0" width="1.6" height="22" fill="#4caf50"/></svg>
<svg style="position:absolute;left:1944px;top:361px;" width="20" height="22" viewBox="0 0 20 22"><rect x="2" y="3.0" width="12" height="4.3" fill="#ececec"/><rect x="2" y="9.3" width="10" height="4.3" fill="#ececec"/><rect x="2" y="15.6" width="11" height="4.3" fill="#ececec"/><rect x="0" y="0" width="1.6" height="22" fill="#4caf50"/></svg>
<svg style="position:absolute;left:1992px;top:361px;" width="20" height="22" viewBox="0 0 20 22"><rect x="1" y="3.0" width="17" height="4.3" fill="#ececec"/><rect x="4" y="9.3" width="11" height="4.3" fill="#ececec"/><rect x="1" y="15.6" width="17" height="4.3" fill="#ececec"/><rect x="9" y="0" width="1.6" height="22" fill="#9a9a9a"/></svg>
<svg style="position:absolute;left:2038px;top:361px;" width="20" height="22" viewBox="0 0 20 22"><rect x="1" y="3.0" width="13" height="4.3" fill="#ececec"/><rect x="2" y="9.3" width="11" height="4.3" fill="#ececec"/><rect x="1" y="15.6" width="13" height="4.3" fill="#ececec"/><rect x="15" y="0" width="1.6" height="22" fill="#9a9a9a"/></svg>
<svg style="position:absolute;left:2082px;top:361px;" width="20" height="22" viewBox="0 0 20 22"><rect x="3" y="3.0" width="13" height="4.3" fill="#ececec"/><rect x="3" y="9.3" width="11" height="4.3" fill="#ececec"/><rect x="3" y="15.6" width="13" height="4.3" fill="#ececec"/><rect x="1" y="0" width="1.6" height="22" fill="#9a9a9a"/></svg>
<svg style="position:absolute;left:2126px;top:361px;" width="20" height="22" viewBox="0 0 20 22"><text x="2" y="20" font-size="19" font-family="Liberation Serif" fill="#ececec" font-weight="bold">y</text><text x="6" y="11" font-size="11" fill="#ececec" font-family="Liberation Serif">a</text><rect x="1" y="2" width="1.5" height="19" fill="#4caf50"/></svg>
<svg style="position:absolute;left:1899px;top:407px;" width="22" height="22" viewBox="0 0 22 22"><rect x="2.0" y="3" width="4.3" height="14" fill="#ececec"/><rect x="8.3" y="6" width="4.3" height="11" fill="#ececec"/><rect x="14.6" y="2" width="4.3" height="15" fill="#ececec"/><rect x="0" y="19" width="22" height="1.6" fill="#4caf50"/></svg>
<svg style="position:absolute;left:1943px;top:407px;" width="22" height="22" viewBox="0 0 22 22"><rect x="2.0" y="5" width="4.3" height="13" fill="#ececec"/><rect x="8.3" y="5" width="4.3" height="10" fill="#ececec"/><rect x="14.6" y="5" width="4.3" height="13" fill="#ececec"/><rect x="0" y="2" width="22" height="1.6" fill="#4caf50"/></svg>
<svg style="position:absolute;left:1991px;top:407px;" width="22" height="22" viewBox="0 0 22 22"><rect x="2.0" y="3" width="4.3" height="17" fill="#ececec"/><rect x="8.3" y="5" width="4.3" height="11" fill="#ececec"/><rect x="14.6" y="3" width="4.3" height="17" fill="#ececec"/><rect x="0" y="10" width="22" height="1.6" fill="#4caf50"/></svg>
<svg style="position:absolute;left:2037px;top:407px;" width="22" height="22" viewBox="0 0 22 22"><rect x="2.0" y="5" width="4.3" height="13" fill="#ececec"/><rect x="8.3" y="7" width="4.3" height="11" fill="#ececec"/><rect x="14.6" y="6" width="4.3" height="12" fill="#ececec"/><rect x="0" y="19" width="22" height="1.6" fill="#4caf50"/></svg>
<svg style="position:absolute;left:2081px;top:407px;" width="22" height="22" viewBox="0 0 22 22"><rect x="2.0" y="5" width="4.3" height="15" fill="#ececec"/><rect x="8.3" y="5" width="4.3" height="11" fill="#ececec"/><rect x="14.6" y="5" width="4.3" height="15" fill="#ececec"/><rect x="0" y="2" width="22" height="1.6" fill="#4caf50"/></svg>
<svg style="position:absolute;left:2125px;top:407px;" width="22" height="22" viewBox="0 0 22 22"><text x="3" y="16" font-size="15" font-weight="bold" fill="#ececec" font-family="Liberation Sans">ya</text><rect x="1" y="17" width="20" height="1.5" fill="#4caf50"/></svg>
<div class="" style="position:absolute;left:1872px;top:458.46px;font-size:16px;line-height:16px;color:#f0f0f0;font-weight:bold;white-space:nowrap;">Distribute</div>
<svg style="position:absolute;left:1900.7px;top:491px;" width="21" height="22" viewBox="0 0 21 22"><rect x="2" y="8" width="6" height="13" fill="#ececec"/><rect x="10" y="9" width="6" height="7" fill="#ececec"/><rect x="3" y="1" width="1" height="6" fill="#aaa"/><rect x="12" y="0" width="1.4" height="7" fill="#4caf50"/></svg>
<svg style="position:absolute;left:1946px;top:491px;" width="21" height="22" viewBox="0 0 21 22"><rect x="2" y="8" width="6" height="13" fill="#ececec"/><rect x="10" y="9" width="6" height="7" fill="#ececec"/><rect x="3" y="1" width="1" height="6" fill="#aaa"/><rect x="12" y="0" width="1.4" height="7" fill="#4caf50"/></svg>
<svg style="position:absolute;left:1991.5px;top:491px;" width="21" height="22" viewBox="0 0 21 22"><rect x="2" y="9" width="6" height="7" fill="#ececec"/><rect x="10" y="8" width="6" height="13" fill="#ececec"/><rect x="3" y="1" width="1" height="6" fill="#aaa"/><rect x="12" y="0" width="1.4" height="7" fill="#4caf50"/></svg>
<svg style="position:absolute;left:2036.7px;top:491px;" width="21" height="22" viewBox="0 0 21 22"><rect x="1" y="8" width="4" height="12" fill="#ececec"/><rect x="8" y="8" width="5" height="7" fill="#ececec"/><rect x="16" y="8" width="4" height="13" fill="#ececec"/><path d="M2 3 H19" stroke="#4caf50" stroke-width="1.2"/></svg>
<svg style="position:absolute;left:2082px;top:491px;" width="21" height="22" viewBox="0 0 21 22"><text x="1" y="17" font-size="13" font-weight="bold" font-family="Liberation Serif" fill="#ececec">ay</text><path d="M2 3 H12" stroke="#4caf50" stroke-width="1.4"/></svg>
<svg style="position:absolute;left:1899.7px;top:537px;" width="22" height="22" viewBox="0 0 22 22"><rect x="7" y="4" width="13" height="6" fill="#ececec"/><rect x="9" y="12" width="8" height="7" fill="#ececec"/><path d="M1 5 H7 M1 13 H7" stroke="#4caf50" stroke-width="1.2"/></svg>
<svg style="position:absolute;left:1945px;top:537px;" width="22" height="22" viewBox="0 0 22 22"><rect x="7" y="4" width="13" height="6" fill="#ececec"/><rect x="9" y="12" width="8" height="7" fill="#ececec"/><path d="M1 5 H7 M1 13 H7" stroke="#4caf50" stroke-width="1.2"/></svg>
<svg style="position:absolute;left:1990.5px;top:537px;" width="22" height="22" viewBox="0 0 22 22"><rect x="7" y="4" width="13" height="6" fill="#ececec"/><rect x="9" y="12" width="8" height="7" fill="#ececec"/><path d="M1 5 H7 M1 13 H7" stroke="#4caf50" stroke-width="1.2"/></svg>
<svg style="position:absolute;left:2035.7px;top:537px;" width="22" height="22" viewBox="0 0 22 22"><rect x="8" y="1" width="12" height="4" fill="#ececec"/><rect x="8" y="9" width="8" height="4" fill="#ececec"/><rect x="8" y="17" width="12" height="4" fill="#ececec"/><path d="M3 2 V20" stroke="#4caf50" stroke-width="1.2"/></svg>
<svg style="position:absolute;left:2081px;top:537px;" width="22" height="22" viewBox="0 0 22 22"><text x="8" y="20" font-size="15" font-weight="bold" font-family="Liberation Serif" fill="#ececec">y</text><text x="12" y="9" font-size="10" font-weight="bold" fill="#ececec" font-family="Liberation Serif">a</text><path d="M2 6 V20" stroke="#4caf50" stroke-width="1.3"/></svg>
<div class="" style="position:absolute;left:1872px;top:588.46px;font-size:16px;line-height:16px;color:#f0f0f0;font-weight:bold;white-space:nowrap;">Rearrange</div>
<svg style="position:absolute;left:1900px;top:622px;" width="21" height="21" viewBox="0 0 21 21"><path d="M5 4 L15 3 L18 12 L11 19 L3 12Z" stroke="#ececec" stroke-width="1.5" fill="none"/><rect x="3" y="2" width="4" height="4" fill="#ececec"/><rect x="13" y="1" width="4" height="4" fill="#ececec"/><rect x="16" y="10" width="4" height="4" fill="#ececec"/><rect x="9" y="17" width="4" height="4" fill="#ececec"/><rect x="1" y="10" width="4" height="4" fill="#ececec"/></svg>
<svg style="position:absolute;left:1944px;top:622px;" width="21" height="21" viewBox="0 0 21 21"><rect x="1" y="1" width="8" height="7" fill="#ececec"/><rect x="12" y="12" width="8" height="8" fill="#ececec"/><path d="M11 3 Q16 4 16 10" stroke="#ececec" stroke-width="1.6" fill="none"/><path d="M3 11 L9 15 L6 16 L8 20 L3 20Z" fill="#3f8fd8"/></svg>
<svg style="position:absolute;left:1992px;top:622px;" width="21" height="21" viewBox="0 0 21 21"><rect x="1" y="1" width="8" height="7" fill="#ececec"/><rect x="12" y="12" width="8" height="8" fill="#ececec"/><path d="M11 3 Q16 4 16 10" stroke="#ececec" stroke-width="1.6" fill="none"/><path d="M2 12 H10 M2 16 H10 M2 20 H10" stroke="#3f8fd8" stroke-width="1.8"/></svg>
<svg style="position:absolute;left:2038px;top:622px;" width="21" height="21" viewBox="0 0 21 21"><rect x="1" y="1" width="8" height="7" fill="#ececec"/><rect x="12" y="12" width="8" height="8" fill="#ececec"/><path d="M11 3 Q16 4 16 10" stroke="#ececec" stroke-width="1.6" fill="none"/><circle cx="6" cy="16" r="4" stroke="#3f8fd8" stroke-width="1.5" fill="none"/></svg>
<svg style="position:absolute;left:2082px;top:622px;" width="21" height="21" viewBox="0 0 21 21"><rect x="3" y="1" width="5" height="4" fill="#ececec"/><rect x="12" y="1" width="5" height="4" fill="#ececec"/><rect x="1" y="7" width="6" height="5" fill="#ececec"/><rect x="9" y="8" width="4" height="4" fill="#ececec"/><rect x="14" y="7" width="6" height="5" fill="#ececec"/><rect x="4" y="14" width="5" height="4" fill="#ececec"/><rect x="12" y="14" width="5" height="4" fill="#ececec"/><rect x="8" y="18" width="5" height="3" fill="#ececec"/></svg>
<svg style="position:absolute;left:2126px;top:622px;" width="21" height="21" viewBox="0 0 21 21"><rect x="14" y="1" width="6" height="5" fill="#ececec"/><rect x="1" y="8" width="6" height="5" fill="#ececec"/><rect x="14" y="15" width="6" height="5" fill="#ececec"/><path d="M7 10 L14 4 M7 11 L14 17 M17 6 V15" stroke="#ececec" stroke-width="1.2" stroke-dasharray="2 1.5"/></svg>
<div class="" style="position:absolute;left:1872px;top:673.16px;font-size:16px;line-height:16px;color:#f0f0f0;font-weight:bold;white-space:nowrap;">Remove overlaps</div>
<div class="" style="position:absolute;left:1887px;top:709.30px;font-size:15px;line-height:15px;color:#cfcfcf;font-weight:normal;white-space:nowrap;">H:</div>
<div style="position:absolute;left:1904.4px;top:694.4px;width:115.59999999999991px;height:43.4px;background:#2e2e2e;border:1px solid #222;border-radius:7px"></div>
<div style="position:absolute;left:1954.4px;top:695px;width:1px;height:42px;background:#282828"></div>
<div style="position:absolute;left:1987.8px;top:695px;width:1px;height:42px;background:#282828"></div>
<div class="" style="position:absolute;left:1913px;top:708.46px;font-size:16px;line-height:16px;color:#e8c89a;font-weight:normal;white-space:nowrap;">0</div>
<div style="position:absolute;left:1961.1px;top:715.5px;width:20px;height:2px;background:#eee"></div>
<div style="position:absolute;left:1993.9px;top:715.5px;width:20px;height:2px;background:#eee"></div>
<div style="position:absolute;left:2002.9px;top:706.5px;width:2px;height:20px;background:#eee"></div>
<div style="position:absolute;left:2040px;top:694.4px;width:116.69999999999982px;height:43.4px;background:#2e2e2e;border:1px solid #222;border-radius:7px"></div>
<div style="position:absolute;left:2090.5px;top:695px;width:1px;height:42px;background:#282828"></div>
<div style="position:absolute;left:2124px;top:695px;width:1px;height:42px;background:#282828"></div>
<div class="" style="position:absolute;left:2049px;top:708.46px;font-size:16px;line-height:16px;color:#e8c89a;font-weight:normal;white-space:nowrap;">0</div>
<div style="position:absolute;left:2097.25px;top:715.5px;width:20px;height:2px;background:#eee"></div>
<div style="position:absolute;left:2130.35px;top:715.5px;width:20px;height:2px;background:#eee"></div>
<div style="position:absolute;left:2139.35px;top:706.5px;width:2px;height:20px;background:#eee"></div>
<div class="" style="position:absolute;left:2026px;top:709.30px;font-size:15px;line-height:15px;color:#cfcfcf;font-weight:normal;white-space:nowrap;">V:</div>
<svg style="position:absolute;left:2177px;top:705px;" width="20" height="22" viewBox="0 0 20 22"><rect x="1" y="7" width="4" height="14" fill="#ececec"/><rect x="1" y="1" width="4" height="4" fill="#ececec"/><rect x="8" y="1" width="4" height="20" fill="#ececec"/><rect x="15" y="1" width="4" height="20" fill="#ececec"/></svg>
<div style="position:absolute;left:2067.8px;top:749.5px;width:222.2px;height:43.5px;background:#363636;border:1px solid #262626;border-radius:7px;box-shadow:0 1px 1px #222"></div>
<div class="" style="position:absolute;left:2151px;top:764.88px;font-size:15.5px;line-height:15.5px;color:#dcdcdc;font-weight:normal;white-space:nowrap;">Arrange</div>
<div style="position:absolute;left:1853.5px;top:668.0px;width:4px;height:4px;background:#ddd;border-radius:2px"></div>
<div style="position:absolute;left:1853.5px;top:674.5px;width:4px;height:4px;background:#ddd;border-radius:2px"></div>
<div style="position:absolute;left:1853.5px;top:681.0px;width:4px;height:4px;background:#ddd;border-radius:2px"></div>
<div style="position:absolute;left:1825px;top:89px;width:22px;height:34px;background:#2a2a2a;border-radius:6px;border:1px solid #262626"></div>
<svg style="position:absolute;left:1825px;top:93px;" width="22" height="24" viewBox="0 0 22 24"><circle cx="10" cy="11" r="9" fill="#ececec"/><path d="M16 17 L20 21" stroke="#ececec" stroke-width="3" stroke-linecap="round"/><text x="10" y="15" font-size="10" font-weight="bold" text-anchor="middle" fill="#333" font-family="Liberation Sans">1:1</text></svg>
<div style="position:absolute;left:1830.5px;top:127.5px;width:11.5px;height:622px;background:#b0b0b0;border-radius:6px"></div>
<div style="position:absolute;left:545px;top:1240px;width:660px;height:12px;background:#b8b8b8;border-radius:6px"></div>
<div style="position:absolute;left:1825px;top:1229px;width:22px;height:34px;background:#2e2e2e;border-radius:6px;border:1px solid #262626"></div>
<svg style="position:absolute;left:1826px;top:1236px;" width="20" height="20" viewBox="0 0 20 20"><circle cx="10" cy="7" r="4.5" fill="none" stroke="#999" stroke-width="1.4"/><circle cx="6.5" cy="13" r="4.5" fill="none" stroke="#5a9a5a" stroke-width="1.4"/><circle cx="13.5" cy="13" r="4.5" fill="none" stroke="#a05a8a" stroke-width="1.4"/></svg>
<svg style="position:absolute;left:2517.0px;top:106.0px;" width="24" height="24" viewBox="0 0 24 24"><path d="M4 3 H13 L18 8 V21 H4Z" fill="none" stroke="#ececec" stroke-width="2.6"/><path d="M12 3 V9 H18" fill="#ececec"/><circle cx="20" cy="4" r="2.5" fill="#4caf50"/></svg>
<svg style="position:absolute;left:2517.0px;top:152.0px;" width="24" height="24" viewBox="0 0 24 24"><path d="M3 4 H10 L12 7 H20 V10 H7 L3 20Z" fill="#ececec"/><path d="M7 11 H22 L19 20 H3Z" fill="#ececec"/></svg>
<svg style="position:absolute;left:2517.0px;top:199.0px;" width="24" height="24" viewBox="0 0 24 24"><path d="M12 1 V10 M8 6 L12 11 L16 6" stroke="#4caf50" stroke-width="2.4" fill="none"/><path d="M3 12 H8 L9 15 H15 L16 12 H21 V21 H3Z" fill="#ececec"/></svg>
<svg style="position:absolute;left:2517.0px;top:245.0px;" width="24" height="24" viewBox="0 0 24 24"><rect x="6" y="2" width="12" height="5" fill="#ececec"/><rect x="2" y="8" width="20" height="9" rx="2" fill="#ececec"/><rect x="6" y="14" width="12" height="7" fill="#ececec" stroke="#3b3b3b" stroke-width="1.2"/></svg>
<div style="position:absolute;left:2510px;top:290px;width:40px;height:1px;background:#444"></div>
<svg style="position:absolute;left:2517.0px;top:310.0px;" width="24" height="24" viewBox="0 0 24 24"><path d="M6 2 H15 L20 7 V22 H6 V16" fill="none" stroke="#ececec" stroke-width="2.4"/><path d="M6 8 V10" stroke="#ececec" stroke-width="2.4"/><path d="M2 13 H11" stroke="#4caf50" stroke-width="2.4"/><path d="M9 9 L13 13 L9 17Z" fill="#4caf50"/></svg>
<svg style="position:absolute;left:2517.0px;top:357.0px;" width="24" height="24" viewBox="0 0 24 24"><path d="M3 2 H12 L17 7 V22 H3Z" fill="none" stroke="#ececec" stroke-width="2.4"/><path d="M10 13 H19" stroke="#4caf50" stroke-width="2.4"/><path d="M18 9 L23 13 L18 17Z" fill="#4caf50"/></svg>
<div style="position:absolute;left:2510px;top:402px;width:40px;height:1px;background:#444"></div>
<svg style="position:absolute;left:2517.0px;top:423.0px;" width="24" height="24" viewBox="0 0 24 24"><path d="M7 7 H15 A5 5 0 0 1 15 17 H10" stroke="#ececec" stroke-width="2.6" fill="none"/><path d="M9 2 L3 7 L9 12Z" fill="#ececec"/></svg>
<svg style="position:absolute;left:2517.0px;top:470.0px;" width="24" height="24" viewBox="0 0 24 24"><path d="M17 7 H9 A5 5 0 0 0 9 17 H14" stroke="#777" stroke-width="2.6" fill="none"/><path d="M15 2 L21 7 L15 12Z" fill="#777"/></svg>
<div style="position:absolute;left:2510px;top:515px;width:40px;height:1px;background:#444"></div>
<svg style="position:absolute;left:2517.0px;top:536.0px;" width="24" height="24" viewBox="0 0 24 24"><rect x="2" y="2" width="12" height="11" fill="#ececec"/><rect x="8" y="9" width="13" height="12" fill="#ececec" stroke="#3b3b3b" stroke-width="1.5"/></svg>
<svg style="position:absolute;left:2517.0px;top:583.0px;" width="24" height="24" viewBox="0 0 24 24"><circle cx="6" cy="18" r="3.5" fill="none" stroke="#ececec" stroke-width="2.4"/><circle cx="18" cy="18" r="3.5" fill="none" stroke="#ececec" stroke-width="2.4"/><path d="M8 15 L18 2 M16 15 L6 2" stroke="#ececec" stroke-width="2.4"/></svg>
<svg style="position:absolute;left:2517.0px;top:629.0px;" width="24" height="24" viewBox="0 0 24 24"><rect x="4" y="4" width="16" height="18" rx="1" fill="none" stroke="#ececec" stroke-width="2.4"/><rect x="8" y="2" width="8" height="4" fill="#ececec"/><rect x="7" y="9" width="10" height="10" fill="#aaa"/></svg>
<div style="position:absolute;left:2510px;top:674px;width:40px;height:1px;background:#444"></div>
<svg style="position:absolute;left:2517.0px;top:695.0px;" width="24" height="24" viewBox="0 0 24 24"><circle cx="11" cy="11" r="9" fill="#ececec"/><path d="M17 17 L22 22" stroke="#ececec" stroke-width="3.2" stroke-linecap="round"/><rect x="6" y="6" width="10" height="10" fill="none" stroke="#555" stroke-width="1.2" stroke-dasharray="1.5 1"/></svg>
<svg style="position:absolute;left:2517.0px;top:741.0px;" width="24" height="24" viewBox="0 0 24 24"><circle cx="11" cy="11" r="9" fill="#ececec"/><path d="M17 17 L22 22" stroke="#ececec" stroke-width="3.2" stroke-linecap="round"/><circle cx="9" cy="9" r="3.5" fill="#333"/><rect x="10" y="10" width="6" height="6" fill="#333"/></svg>
<svg style="position:absolute;left:2517.0px;top:788.0px;" width="24" height="24" viewBox="0 0 24 24"><circle cx="11" cy="11" r="9" fill="#ececec"/><path d="M17 17 L22 22" stroke="#ececec" stroke-width="3.2" stroke-linecap="round"/><rect x="7" y="4" width="8" height="13" fill="none" stroke="#555" stroke-width="1.4"/></svg>
<svg style="position:absolute;left:2517.0px;top:834.0px;" width="24" height="24" viewBox="0 0 24 24"><rect x="4" y="4" width="16" height="16" fill="none" stroke="#ececec" stroke-width="2"/><path d="M12 8 V16 M8 12 H16" stroke="#ececec" stroke-width="2"/><path d="M1 5 V1 H5 M19 1 H23 V5 M1 19 V23 H5 M19 23 H23 V19" stroke="#888" stroke-width="1.2" fill="none"/></svg>
<div style="position:absolute;left:2510px;top:880px;width:40px;height:1px;background:#444"></div>
<svg style="position:absolute;left:2517.0px;top:900.0px;" width="24" height="24" viewBox="0 0 24 24"><rect x="2" y="2" width="11" height="10" fill="#ececec"/><rect x="8" y="8" width="13" height="12" fill="#4caf50" stroke="#3b3b3b" stroke-width="1.5"/></svg>
<svg style="position:absolute;left:2517.0px;top:948.0px;" width="24" height="24" viewBox="0 0 24 24"><rect x="2" y="2" width="11" height="10" fill="#ececec"/><rect x="8" y="8" width="13" height="13" fill="#ececec" stroke="#3b3b3b" stroke-width="1.5"/><rect x="11" y="13" width="7" height="6" fill="#333"/><path d="M12.5 13 V11 a2 2 0 0 1 4 0 V13" stroke="#333" stroke-width="1.3" fill="none"/></svg>
<svg style="position:absolute;left:2517.0px;top:995.0px;" width="24" height="24" viewBox="0 0 24 24"><rect x="2" y="2" width="11" height="10" fill="#ececec"/><rect x="8" y="8" width="13" height="13" fill="#ececec" stroke="#3b3b3b" stroke-width="1.5"/><rect x="11" y="14" width="7" height="5" fill="#333"/></svg>
<div style="position:absolute;left:2510px;top:1040px;width:40px;height:1px;background:#444"></div>
<svg style="position:absolute;left:2517.0px;top:1060.0px;" width="24" height="24" viewBox="0 0 24 24"><rect x="2" y="2" width="4" height="4" fill="#4caf50"/><rect x="18" y="2" width="4" height="4" fill="#4caf50"/><rect x="2" y="18" width="4" height="4" fill="#4caf50"/><rect x="18" y="18" width="4" height="4" fill="#4caf50"/><circle cx="10" cy="10" r="5" fill="#ececec"/><path d="M9 18 L17 10 V18Z" fill="#ececec"/></svg>
<svg style="position:absolute;left:2517.0px;top:1107.0px;" width="24" height="24" viewBox="0 0 24 24"><rect x="2" y="2" width="3" height="3" fill="#ececec"/><rect x="19" y="2" width="3" height="3" fill="#ececec"/><rect x="2" y="19" width="3" height="3" fill="#ececec"/><rect x="19" y="19" width="3" height="3" fill="#ececec"/><circle cx="10" cy="10" r="5" fill="#ececec"/><path d="M10 18 L17 11 V18Z" fill="#aaa"/></svg>
<div style="position:absolute;left:2510px;top:1150px;width:40px;height:1px;background:#444"></div>
<svg style="position:absolute;left:2517.0px;top:1172.0px;" width="24" height="24" viewBox="0 0 24 24"><path d="M3 21 V3 H18" stroke="#ececec" stroke-width="2" fill="none"/><path d="M10 15 L20 4 L22 6 L12 17Z" fill="#ececec"/><path d="M6 21 L10 15 L12 17Z" fill="#3f8fd8"/></svg>
<svg style="position:absolute;left:2517.0px;top:1225.0px;" width="24" height="24" viewBox="0 0 24 24"><path d="M8 4 L17 12 L8 20Z" fill="#eee"/></svg>
<svg style="position:absolute;left:0px;top:1279px;" width="2460" height="22" viewBox="0 0 2460 22"><rect x="1.30" y="0" width="22" height="22" fill="#fff"/><path d="M2.30 1 L22.30 21 M22.30 1 L2.30 21" stroke="#a03030" stroke-width="1.6"/><rect x="23.98" y="0" width="21.7" height="22" fill="#000000"/><rect x="46.66" y="0" width="21.7" height="22" fill="#1c1c1c"/><rect x="69.34" y="0" width="21.7" height="22" fill="#383838"/><rect x="92.02" y="0" width="21.7" height="22" fill="#5a5a5a"/><rect x="114.70" y="0" width="21.7" height="22" fill="#787878"/><rect x="137.38" y="0" width="21.7" height="22" fill="#8e8e8e"/><rect x="160.06" y="0" width="21.7" height="22" fill="#a6a6a6"/><rect x="182.74" y="0" width="21.7" height="22" fill="#bebebe"/><rect x="205.42" y="0" width="21.7" height="22" fill="#d4d4d4"/><rect x="228.10" y="0" width="21.7" height="22" fill="#e4e4e4"/><rect x="250.78" y="0" width="21.7" height="22" fill="#ececec"/><rect x="273.46" y="0" width="21.7" height="22" fill="#f2f2f2"/><rect x="296.14" y="0" width="21.7" height="22" fill="#f8f8f8"/><rect x="318.82" y="0" width="21.7" height="22" fill="#ffffff"/><rect x="341.50" y="0" width="21.7" height="22" fill="#8a1b0f"/><rect x="364.18" y="0" width="21.7" height="22" fill="#e63223"/><rect x="386.86" y="0" width="21.7" height="22" fill="#8f8a2a"/><rect x="409.54" y="0" width="21.7" height="22" fill="#fdfb4a"/><rect x="432.22" y="0" width="21.7" height="22" fill="#3b8f2a"/><rect x="454.90" y="0" width="21.7" height="22" fill="#6ef24a"/><rect x="477.58" y="0" width="21.7" height="22" fill="#3b8a8a"/><rect x="500.26" y="0" width="21.7" height="22" fill="#74f7fb"/><rect x="522.94" y="0" width="21.7" height="22" fill="#0b0b8a"/><rect x="545.62" y="0" width="21.7" height="22" fill="#0b22f5"/><rect x="568.30" y="0" width="21.7" height="22" fill="#8a1b8f"/><rect x="590.98" y="0" width="21.7" height="22" fill="#e632f0"/><rect x="613.66" y="0" width="21.7" height="22" fill="#2e0606"/><rect x="636.34" y="0" width="21.7" height="22" fill="#6a120e"/><rect x="659.02" y="0" width="21.7" height="22" fill="#951a12"/><rect x="681.70" y="0" width="21.7" height="22" fill="#b82218"/><rect x="704.38" y="0" width="21.7" height="22" fill="#d52b1e"/><rect x="727.06" y="0" width="21.7" height="22" fill="#e8352a"/><rect x="749.74" y="0" width="21.7" height="22" fill="#ee4a40"/><rect x="772.42" y="0" width="21.7" height="22" fill="#ef7068"/><rect x="795.10" y="0" width="21.7" height="22" fill="#f29590"/><rect x="817.78" y="0" width="21.7" height="22" fill="#f5b8b5"/><rect x="840.46" y="0" width="21.7" height="22" fill="#fadcdb"/><rect x="863.14" y="0" width="21.7" height="22" fill="#2a0a08"/><rect x="885.82" y="0" width="21.7" height="22" fill="#5e1a17"/><rect x="908.50" y="0" width="21.7" height="22" fill="#7e2a25"/><rect x="931.18" y="0" width="21.7" height="22" fill="#a33a33"/><rect x="953.86" y="0" width="21.7" height="22" fill="#c84a42"/><rect x="976.54" y="0" width="21.7" height="22" fill="#d2706b"/><rect x="999.22" y="0" width="21.7" height="22" fill="#dc9a97"/><rect x="1021.90" y="0" width="21.7" height="22" fill="#e6bebd"/><rect x="1044.58" y="0" width="21.7" height="22" fill="#f0e0df"/><rect x="1067.26" y="0" width="21.7" height="22" fill="#2a1a1a"/><rect x="1089.94" y="0" width="21.7" height="22" fill="#4a3a3a"/><rect x="1112.62" y="0" width="21.7" height="22" fill="#705f5f"/><rect x="1135.30" y="0" width="21.7" height="22" fill="#958181"/><rect x="1157.98" y="0" width="21.7" height="22" fill="#b5a8a8"/><rect x="1180.66" y="0" width="21.7" height="22" fill="#d5cdcd"/><rect x="1203.34" y="0" width="21.7" height="22" fill="#ebe5e5"/><rect x="1226.02" y="0" width="21.7" height="22" fill="#2e1406"/><rect x="1248.70" y="0" width="21.7" height="22" fill="#63300e"/><rect x="1271.38" y="0" width="21.7" height="22" fill="#8e4a1a"/><rect x="1294.06" y="0" width="21.7" height="22" fill="#b05a22"/><rect x="1316.74" y="0" width="21.7" height="22" fill="#d06a2a"/><rect x="1339.42" y="0" width="21.7" height="22" fill="#ee7e30"/><rect x="1362.10" y="0" width="21.7" height="22" fill="#f09a50"/><rect x="1384.78" y="0" width="21.7" height="22" fill="#f2b078"/><rect x="1407.46" y="0" width="21.7" height="22" fill="#f5c8a0"/><rect x="1430.14" y="0" width="21.7" height="22" fill="#f8dcc2"/><rect x="1452.82" y="0" width="21.7" height="22" fill="#fbece0"/><rect x="1475.50" y="0" width="21.7" height="22" fill="#2a1a0a"/><rect x="1498.18" y="0" width="21.7" height="22" fill="#5e3e1e"/><rect x="1520.86" y="0" width="21.7" height="22" fill="#8a5a32"/><rect x="1543.54" y="0" width="21.7" height="22" fill="#a87048"/><rect x="1566.22" y="0" width="21.7" height="22" fill="#c98a58"/><rect x="1588.90" y="0" width="21.7" height="22" fill="#d6a07a"/><rect x="1611.58" y="0" width="21.7" height="22" fill="#e2bc9a"/><rect x="1634.26" y="0" width="21.7" height="22" fill="#ead6c2"/><rect x="1656.94" y="0" width="21.7" height="22" fill="#f2e8de"/><rect x="1679.62" y="0" width="21.7" height="22" fill="#2a2220"/><rect x="1702.30" y="0" width="21.7" height="22" fill="#4a4238"/><rect x="1724.98" y="0" width="21.7" height="22" fill="#7a6e62"/><rect x="1747.66" y="0" width="21.7" height="22" fill="#9a8e80"/><rect x="1770.34" y="0" width="21.7" height="22" fill="#b8aea2"/><rect x="1793.02" y="0" width="21.7" height="22" fill="#d2ccc6"/><rect x="1815.70" y="0" width="21.7" height="22" fill="#ebe8e4"/><rect x="1838.38" y="0" width="21.7" height="22" fill="#2e2808"/><rect x="1861.06" y="0" width="21.7" height="22" fill="#6a5a1a"/><rect x="1883.74" y="0" width="21.7" height="22" fill="#8e7a2a"/><rect x="1906.42" y="0" width="21.7" height="22" fill="#b8a038"/><rect x="1929.10" y="0" width="21.7" height="22" fill="#d6b440"/><rect x="1951.78" y="0" width="21.7" height="22" fill="#f2cc40"/><rect x="1974.46" y="0" width="21.7" height="22" fill="#f6d860"/><rect x="1997.14" y="0" width="21.7" height="22" fill="#f8e48a"/><rect x="2019.82" y="0" width="21.7" height="22" fill="#f9ecaa"/><rect x="2042.50" y="0" width="21.7" height="22" fill="#fbf2c8"/><rect x="2065.18" y="0" width="21.7" height="22" fill="#fdf8e8"/><rect x="2087.86" y="0" width="21.7" height="22" fill="#2e2a10"/><rect x="2110.54" y="0" width="21.7" height="22" fill="#5e5428"/><rect x="2133.22" y="0" width="21.7" height="22" fill="#8a7e48"/><rect x="2155.90" y="0" width="21.7" height="22" fill="#b0a058"/><rect x="2178.58" y="0" width="21.7" height="22" fill="#ccbc66"/><rect x="2201.26" y="0" width="21.7" height="22" fill="#dccc88"/><rect x="2223.94" y="0" width="21.7" height="22" fill="#e6dcaa"/><rect x="2246.62" y="0" width="21.7" height="22" fill="#eee8c8"/><rect x="2269.30" y="0" width="21.7" height="22" fill="#f6f2e6"/><rect x="2291.98" y="0" width="21.7" height="22" fill="#2a2824"/><rect x="2314.66" y="0" width="21.7" height="22" fill="#4e4a42"/><rect x="2337.34" y="0" width="21.7" height="22" fill="#767262"/><rect x="2360.02" y="0" width="21.7" height="22" fill="#9a9888"/><rect x="2382.70" y="0" width="21.7" height="22" fill="#b8b6aa"/><rect x="2405.38" y="0" width="21.7" height="22" fill="#d2d0c8"/><rect x="2428.06" y="0" width="21.7" height="22" fill="#e8e8e6"/></svg>
<svg style="position:absolute;left:2458px;top:1276px;" width="24" height="18" viewBox="0 0 24 18"><path d="M4 13 L12 5 L20 13" stroke="#ececec" stroke-width="2.6" fill="none"/></svg>
<svg style="position:absolute;left:2498px;top:1274px;" width="24" height="18" viewBox="0 0 24 18"><path d="M4 5 L12 13 L20 5" stroke="#ececec" stroke-width="2.6" fill="none"/></svg>
<div style="position:absolute;left:2532px;top:1268px;width:28px;height:38px;background:#2e2e2e;border-radius:6px;border:1px solid #262626"></div>
<svg style="position:absolute;left:2536px;top:1276px;" width="22" height="22" viewBox="0 0 22 22"><path d="M2 4 H20 M2 11 H20 M2 18 H20" stroke="#ececec" stroke-width="2.6"/></svg>
<div class="" style="position:absolute;left:27px;top:1307.88px;font-size:15.5px;line-height:15.5px;color:#e0e0e0;font-weight:normal;white-space:nowrap;">Fill:</div>
<div class="" style="position:absolute;left:3px;top:1330.88px;font-size:15.5px;line-height:15.5px;color:#e0e0e0;font-weight:normal;white-space:nowrap;">Stroke:</div>
<div class="" style="position:absolute;left:91px;top:1307.88px;font-size:15.5px;line-height:15.5px;color:#e0e0e0;font-weight:normal;white-space:nowrap;">N/A</div>
<div class="" style="position:absolute;left:91px;top:1330.88px;font-size:15.5px;line-height:15.5px;color:#e0e0e0;font-weight:normal;white-space:nowrap;">N/A</div>
<div class="" style="position:absolute;left:197px;top:1319.88px;font-size:15.5px;line-height:15.5px;color:#dedede;font-weight:normal;white-space:nowrap;">O:</div>
<div style="position:absolute;left:216.8px;top:1305px;width:94px;height:43px;background:#373737;border:1px solid #2a2a2a;border-radius:7px"></div>
<div style="position:absolute;left:266px;top:1306px;width:1px;height:41px;background:#303030"></div>
<div style="position:absolute;left:291px;top:1306px;width:1px;height:41px;background:#303030"></div>
<div class="" style="position:absolute;left:226px;top:1319.88px;font-size:15.5px;line-height:15.5px;color:#8a8a8a;font-weight:normal;white-space:nowrap;">100</div>
<div style="position:absolute;left:270px;top:1325.5px;width:18px;height:1.5px;background:#5a5a5a"></div>
<div style="position:absolute;left:293px;top:1325.5px;width:17px;height:1.5px;background:#5a5a5a"></div>
<div style="position:absolute;left:300.75px;top:1317px;width:1.5px;height:18px;background:#5a5a5a"></div>
<div style="position:absolute;left:348.5px;top:1315px;width:3px;height:23px;background:#4a7ad0"></div>
<div class="" style="position:absolute;left:360px;top:1319.88px;font-size:15.5px;line-height:15.5px;color:#e0e0e0;font-weight:normal;white-space:nowrap;">Layer 1</div>
<svg style="position:absolute;left:436px;top:1316px;" width="22" height="18" viewBox="0 0 22 18"><path d="M1 9 Q11 -1 21 9 Q11 19 1 9Z" fill="none" stroke="#ececec" stroke-width="2.2"/><circle cx="11" cy="9" r="3.8" fill="#ececec"/><path d="M3 3 L5 5 M19 3 L17 5 M11 0 V2" stroke="#ececec" stroke-width="1.5"/></svg>
<svg style="position:absolute;left:486px;top:1314px;" width="22" height="22" viewBox="0 0 22 22"><rect x="1" y="10" width="13" height="11" rx="1" fill="#ececec"/><path d="M11 10 V6 a4 4 0 0 1 8 0 V8" stroke="#ececec" stroke-width="2.4" fill="none"/></svg>
<div style="position:absolute;left:519px;top:1310px;width:1px;height:36px;background:#333"></div>
<div style="position:absolute;left:529px;top:1316.5px;font-size:15.5px;line-height:16px;color:#e0e0e0;white-space:nowrap;" class="mt3"><b>Alt:</b> Select with touch-path, Cycle through objects, Forced Drag</div>
<div class="" style="position:absolute;left:2170px;top:1308.73px;font-size:14.5px;line-height:14.5px;color:#d8d8d8;font-weight:normal;white-space:nowrap;">X:</div>
<div class="" style="position:absolute;left:2203px;top:1308.73px;font-size:14.5px;line-height:14.5px;color:#d8d8d8;font-weight:normal;white-space:nowrap;">380.44</div>
<div class="" style="position:absolute;left:2170px;top:1331.73px;font-size:14.5px;line-height:14.5px;color:#d8d8d8;font-weight:normal;white-space:nowrap;">Y:</div>
<div class="" style="position:absolute;left:2197px;top:1331.73px;font-size:14.5px;line-height:14.5px;color:#d8d8d8;font-weight:normal;white-space:nowrap;">-275.22</div>
<div class="" style="position:absolute;left:2262px;top:1319.88px;font-size:15.5px;line-height:15.5px;color:#d8d8d8;font-weight:normal;white-space:nowrap;">Z:</div>
<div style="position:absolute;left:2275px;top:1304px;width:116px;height:45px;background:#333;border:1px solid #282828;border-radius:7px"></div>
<div style="position:absolute;left:2332.5px;top:1305px;width:1px;height:43px;background:#2d2d2d"></div>
<div style="position:absolute;left:2360.5px;top:1305px;width:1px;height:43px;background:#2d2d2d"></div>
<div class="" style="position:absolute;left:2289px;top:1319.88px;font-size:15.5px;line-height:15.5px;color:#e0e0e0;font-weight:normal;white-space:nowrap;">71%</div>
<div style="position:absolute;left:2336px;top:1325.5px;width:20px;height:2px;background:#eee"></div>
<div style="position:absolute;left:2364px;top:1325.5px;width:20px;height:2px;background:#eee"></div>
<div style="position:absolute;left:2373px;top:1316.5px;width:2px;height:20px;background:#eee"></div>
<div class="" style="position:absolute;left:2406px;top:1319.88px;font-size:15.5px;line-height:15.5px;color:#d8d8d8;font-weight:normal;white-space:nowrap;">R:</div>
<div style="position:absolute;left:2419.5px;top:1304px;width:123.5px;height:45px;background:#333;border:1px solid #282828;border-radius:7px"></div>
<div style="position:absolute;left:2483.5px;top:1305px;width:1px;height:43px;background:#2d2d2d"></div>
<div style="position:absolute;left:2513.5px;top:1305px;width:1px;height:43px;background:#2d2d2d"></div>
<div class="" style="position:absolute;left:2434px;top:1319.88px;font-size:15.5px;line-height:15.5px;color:#cdd6ee;font-weight:normal;white-space:nowrap;">0.00°</div>
<div style="position:absolute;left:2489px;top:1325.5px;width:20px;height:2px;background:#eee"></div>
<div style="position:absolute;left:2519px;top:1325.5px;width:20px;height:2px;background:#eee"></div>
<div style="position:absolute;left:2528px;top:1316.5px;width:2px;height:20px;background:#eee"></div>
<svg style="position:absolute;left:375px;top:435px;" width="60" height="60" viewBox="0 0 60 60"><path d="M12 8.2 L24 21 L35.1 7.6 L35.6 27.5 L40.4 25.4 L47 31.8 L42 36.3 L53.3 50.4 L40 50.4 L35.3 44.5 L35.3 50.7 L26.4 50.7 L26.4 33.5 L21.2 33.5 L21.2 39.6 L12 39.3 Z" fill="#bdbdbd" stroke="#4d4d4d" stroke-width="1.6" stroke-linejoin="miter"/><path d="M14.6 15 L19.6 15 L24.2 23.5 L28.8 15 L33 15 L33 36 L40.6 29.8 L43.6 32.8 L37.8 37.6 L46.6 48.2 L41.6 48.2 L35.2 40.6 L33 42.5 L33 48.2 L28.8 48.2 L28.8 30.5 L24.2 30.5 L19.6 26 L19.6 37 L14.6 37 Z" fill="#000"/></svg>
<svg style="position:absolute;left:1445px;top:448px;" width="56" height="22" viewBox="0 0 56 22"><path d="M3.5 11 H52" stroke="#000" stroke-width="2.4"/><path d="M14 2 Q8 9 2.5 11 Q8 13 14 20" stroke="#000" stroke-width="2.4" fill="none"/></svg>
<svg style="position:absolute;left:1478px;top:528px;" width="24" height="58" viewBox="0 0 24 58"><rect x="12.5" y="4" width="3" height="23" fill="#000"/><path d="M7 33 L16 54" stroke="#000" stroke-width="3"/></svg>
<svg style="position:absolute;left:1272px;top:796px;" width="30" height="25" viewBox="0 0 30 25"><path d="M2 3 H28 M2 12.5 H28 M2 21.5 H28" stroke="#000" stroke-width="3.2" stroke-linecap="round"/></svg>
<svg style="position:absolute;left:502px;top:786px;" width="32" height="44" viewBox="0 0 32 44"><g fill="#000"><ellipse cx="8.4" cy="6.8" rx="6.8" ry="5" transform="rotate(25 8.4 6.8)"/><ellipse cx="23.4" cy="6.8" rx="6.8" ry="5" transform="rotate(-25 23.4 6.8)"/><ellipse cx="15.9" cy="14.8" rx="4.3" ry="2.7"/><ellipse cx="6.2" cy="16.8" rx="2.3" ry="4" transform="rotate(45 6.2 16.8)"/><ellipse cx="25.6" cy="16.8" rx="2.3" ry="4" transform="rotate(-45 25.6 16.8)"/><circle cx="10.3" cy="23" r="4.6"/><circle cx="21.5" cy="23" r="4.6"/><ellipse cx="2.6" cy="25.5" rx="2.3" ry="4.3" transform="rotate(15 2.6 25.5)"/><ellipse cx="29.2" cy="25.5" rx="2.3" ry="4.3" transform="rotate(-15 29.2 25.5)"/><circle cx="15.9" cy="31.4" r="4.5"/><ellipse cx="7" cy="33.4" rx="2.9" ry="4.2" transform="rotate(-35 7 33.4)"/><ellipse cx="24.8" cy="33.4" rx="2.9" ry="4.2" transform="rotate(35 24.8 33.4)"/><ellipse cx="15.9" cy="39.8" rx="4.2" ry="2.5"/></g></svg>
<svg style="position:absolute;left:1276px;top:728px;" width="24" height="28" viewBox="0 0 24 28"><path d="M7.5 24.5 L16.5 3.5" stroke="#000" stroke-width="3.2"/></svg>
<svg style="position:absolute;left:991px;top:1030px;" width="14" height="25" viewBox="0 0 14 25"><path d="M2.9 2.4 L2.9 17 L6.3 13.8 L9.5 21.5 L11.4 20.6 L8.4 13 L12.8 12.6Z" fill="#000" stroke="#f4f4f4" stroke-width="1.6" stroke-linejoin="round"/></svg>
</body></html>
